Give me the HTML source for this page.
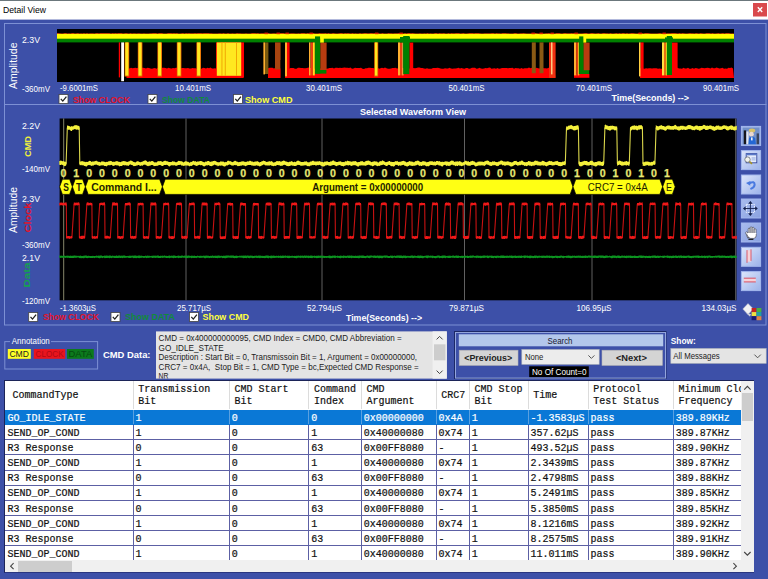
<!DOCTYPE html>
<html><head><meta charset="utf-8"><title>Detail View</title>
<style>
html,body{margin:0;padding:0;}
body{width:768px;height:579px;overflow:hidden;background:#3d50a8;position:relative;font-family:"Liberation Sans",sans-serif;}
svg text{font-family:"Liberation Sans",sans-serif;}
#top{position:absolute;left:0;top:0;}
.grid{position:absolute;left:4.2px;top:379.6px;width:749.6px;height:193.4px;background:#fff;border-top:1.4px solid #1c2458;border-left:1.4px solid #1c2458;border-bottom:0.6px solid #2a3680;box-sizing:border-box;overflow:hidden;font-family:"Liberation Mono",monospace;font-size:10px;color:#111;}
.hc{position:absolute;top:0;height:28px;box-sizing:border-box;border-right:1px solid #dcdcdc;display:flex;align-items:center;padding-top:3.6px;line-height:12.5px;white-space:nowrap;overflow:hidden;-webkit-text-stroke:0.2px;}
.row{position:absolute;left:0;width:735.4px;height:15.13px;box-sizing:border-box;border-bottom:1px solid #5c60a4;}
.row.sel{background:#0a78d6;color:#fff;border-bottom-color:#0a78d6;}
.c{position:absolute;top:0;height:100%;box-sizing:border-box;border-right:1px solid #5c60a4;padding-left:1.8px;padding-top:1.8px;-webkit-text-stroke:0.2px;line-height:14.6px;white-space:nowrap;overflow:hidden;}
.row.sel .c{border-right-color:#5aa0e0;}
.vs{position:absolute;left:735.4px;top:0;width:14px;height:180px;background:#f0f0f0;}
.vth{position:absolute;left:1px;top:12px;width:11px;height:28px;background:#cdcdcd;}
.hs{position:absolute;left:0;top:179.6px;width:750px;height:13px;background:#f0f0f0;}
.hth{position:absolute;left:13px;top:1px;width:54px;height:10.4px;background:#cdcdcd;}
</style></head><body>
<svg id="top" width="768" height="380" viewBox="0 0 768 380">
<rect x="0" y="0" width="768" height="19.6" fill="#fff" />
<rect x="0" y="0" width="768" height="0.8" fill="#46565c" />
<text x="3" y="12.6" font-size="8.8" fill="#000" textLength="43" lengthAdjust="spacingAndGlyphs" >Detail View</text>
<rect x="753" y="3" width="14" height="13.5" fill="#d9494d" />
<path d="M757.8 7.2 L762.2 12 M762.2 7.2 L757.8 12" stroke="#fff" stroke-width="1.4" fill="none"/>
<rect x="4.5" y="23.5" width="761.5" height="81" fill="none" stroke="#7d90d4" stroke-width="1"/>
<rect x="4.5" y="104.5" width="761.5" height="220.5" fill="none" stroke="#7d90d4" stroke-width="1"/>
<rect x="57" y="29" width="677" height="53" fill="#000" />
<path d="M126.5 78 L126.5 68.0 L128.0 67.8 L129.5 68.4 L131.0 67.7 L132.5 68.3 L134.0 68.1 L135.5 67.7 L137.0 68.2 L138.5 67.6 L140.0 68.1 L141.5 67.7 L143.0 67.7 L144.5 68.1 L146.0 68.6 L147.5 67.8 L149.0 67.9 L150.5 68.4 L152.0 68.8 L153.5 68.3 L155.0 68.1 L156.5 68.8 L158.0 67.7 L159.5 68.7 L161.0 68.0 L162.5 67.8 L164.0 67.7 L165.5 68.0 L167.0 68.6 L168.5 67.8 L170.0 68.3 L171.5 68.4 L173.0 68.1 L174.5 68.3 L176.0 67.7 L177.5 67.7 L179.0 67.9 L180.5 68.5 L182.0 68.1 L183.5 68.0 L185.0 68.3 L186.5 68.2 L188.0 68.0 L189.5 68.6 L191.0 68.5 L192.5 67.9 L194.0 68.3 L195.5 68.3 L197.0 68.7 L198.5 68.5 L200.0 68.0 L201.5 68.8 L203.0 67.7 L204.5 68.1 L206.0 68.6 L207.5 67.8 L209.0 68.2 L210.5 67.6 L212.0 68.4 L213.5 68.6 L215.0 68.3 L216.5 68.7 L218.0 68.0 L219.5 68.5 L221.0 68.3 L222.5 68.3 L224.0 68.2 L225.5 68.7 L227.0 68.8 L228.5 68.2 L230.0 68.4 L231.5 67.7 L233.0 68.5 L234.5 68.4 L236.0 68.9 L237.5 68.6 L239.0 68.0 L240.5 68.1 L242.0 68.4 L243.5 67.6 L243.7 78 Z" fill="#ff0000"/>
<path d="M268 78 L268.0 68.2 L269.5 67.8 L271.0 67.7 L272.5 67.7 L274.0 68.6 L275.5 67.8 L277.0 67.9 L278.5 68.1 L280.0 68.7 L281.5 67.7 L283.0 68.2 L284.5 68.3 L286.0 68.7 L287.5 68.6 L289.0 68.7 L290.5 68.0 L292.0 68.1 L293.5 68.1 L295.0 68.7 L296.5 68.8 L298.0 67.8 L299.5 67.8 L301.0 67.9 L302.5 67.9 L304.0 68.2 L305.5 68.3 L307.0 67.9 L308.5 67.6 L310.0 68.1 L311.5 68.1 L313.0 68.3 L314.5 68.8 L316.0 68.5 L317.5 68.2 L319.0 68.4 L320.5 68.5 L322.0 67.7 L323.5 68.7 L325.0 68.6 L326.5 68.7 L328.0 68.6 L329.5 68.1 L331.0 68.1 L332.5 67.7 L334.0 68.4 L335.5 67.7 L337.0 67.7 L338.5 67.9 L340.0 67.8 L341.5 68.0 L343.0 67.7 L344.5 67.6 L346.0 67.8 L347.5 67.7 L349.0 68.1 L350.5 67.6 L352.0 68.7 L353.5 68.4 L355.0 67.8 L356.5 67.9 L358.0 68.0 L359.5 68.1 L361.0 67.8 L362.5 68.7 L364.0 68.9 L365.5 68.2 L367.0 68.2 L368.5 67.7 L370.0 67.7 L371.5 68.0 L373.0 67.9 L374.5 68.6 L376.0 67.8 L377.5 67.6 L379.0 68.8 L380.5 68.3 L382.0 67.8 L383.5 68.3 L385.0 67.6 L386.5 68.3 L388.0 68.8 L389.5 68.7 L391.0 68.5 L392.5 67.9 L394.0 68.1 L395.5 67.8 L397.0 68.6 L398.5 68.3 L400.0 68.6 L401.5 68.0 L403.0 67.9 L404.5 68.6 L406.0 68.8 L407.5 68.7 L409.0 68.6 L410.5 68.6 L412.0 68.5 L413.5 67.9 L415.0 68.3 L416.5 68.0 L418.0 67.6 L419.5 67.6 L421.0 68.0 L422.5 67.9 L424.0 68.5 L425.5 68.8 L427.0 68.2 L428.5 68.8 L430.0 68.8 L431.5 68.8 L433.0 68.1 L434.5 67.9 L436.0 67.9 L437.5 67.8 L439.0 67.9 L440.5 68.4 L442.0 68.7 L443.5 68.7 L445.0 68.2 L446.5 68.4 L448.0 68.6 L449.5 67.7 L451.0 68.4 L452.5 68.7 L454.0 68.6 L455.5 68.5 L457.0 68.2 L458.5 67.8 L460.0 68.6 L461.5 68.0 L463.0 68.6 L464.5 68.8 L466.0 68.1 L467.5 68.1 L469.0 68.8 L470.5 68.5 L472.0 67.8 L473.5 67.8 L475.0 67.8 L476.5 68.7 L478.0 68.6 L479.5 67.8 L481.0 68.6 L482.5 68.8 L484.0 68.4 L485.5 68.0 L487.0 68.3 L488.5 67.8 L490.0 67.6 L491.5 68.8 L493.0 68.4 L494.5 68.3 L496.0 68.8 L497.5 68.1 L499.0 68.7 L500.5 68.6 L502.0 67.9 L503.5 67.9 L505.0 68.0 L506.5 67.9 L508.0 68.3 L509.5 67.9 L511.0 68.1 L512.5 67.8 L514.0 68.7 L515.5 68.0 L517.0 68.2 L518.5 68.3 L520.0 68.7 L521.5 68.1 L523.0 68.8 L524.5 68.2 L526.0 68.3 L527.5 68.3 L529.0 67.6 L530.5 68.2 L532.0 67.8 L533.5 67.6 L535.0 68.6 L536.5 67.8 L538.0 68.2 L539.5 68.5 L541.0 68.3 L542.5 68.0 L544.0 68.3 L545.5 68.3 L547.0 68.6 L548.5 67.7 L550.0 68.3 L551.5 67.9 L553.0 67.9 L554.5 68.6 L555.4 78 Z" fill="#ff0000"/>
<path d="M640 78 L640.0 68.2 L641.5 68.3 L643.0 68.6 L644.5 68.7 L646.0 68.2 L647.5 68.4 L649.0 68.2 L650.5 68.2 L652.0 68.5 L653.5 68.2 L655.0 68.3 L656.5 68.2 L658.0 68.8 L659.5 68.5 L661.0 68.7 L662.5 68.8 L664.0 67.9 L665.5 68.3 L667.0 68.8 L668.5 68.7 L670.0 67.8 L671.5 67.8 L673.0 68.2 L674.5 67.7 L676.0 67.9 L677.5 67.7 L679.0 68.4 L680.5 68.6 L682.0 68.7 L683.5 67.8 L685.0 68.5 L686.5 68.4 L688.0 67.8 L689.5 68.7 L691.0 68.8 L692.5 67.9 L694.0 68.8 L695.5 68.1 L697.0 68.2 L698.5 68.8 L700.0 68.6 L701.5 67.8 L703.0 68.1 L704.5 68.2 L706.0 68.0 L707.5 67.8 L709.0 68.0 L710.5 68.5 L712.0 67.6 L713.5 68.3 L715.0 68.2 L716.5 67.6 L718.0 68.0 L719.5 68.4 L721.0 68.2 L722.5 67.7 L724.0 68.8 L725.5 68.6 L727.0 68.8 L728.5 67.7 L730.0 67.9 L731.5 67.6 L733.0 68.6 L734 78 Z" fill="#ff0000"/>
<path d="M57 35 L57.0 33.1 L58.5 33.0 L60.0 33.2 L61.5 33.5 L63.0 33.5 L64.5 33.1 L66.0 33.0 L67.5 33.5 L69.0 33.3 L70.5 33.4 L72.0 33.0 L73.5 33.0 L75.0 33.4 L76.5 33.2 L78.0 33.0 L79.5 33.5 L81.0 33.3 L82.5 33.5 L84.0 33.0 L85.5 33.5 L87.0 33.0 L88.5 33.5 L90.0 33.2 L91.5 33.2 L93.0 33.3 L94.5 33.5 L96.0 33.1 L97.5 33.0 L99.0 33.3 L100.5 33.1 L102.0 33.0 L103.5 33.1 L105.0 33.0 L106.5 33.1 L108.0 33.1 L109.5 33.1 L111.0 33.4 L112.5 33.1 L114.0 33.3 L115.5 33.1 L117.0 33.2 L118.5 33.0 L120.0 33.1 L121.5 33.0 L123.0 33.4 L124.5 33.3 L126.0 33.1 L127.5 33.2 L129.0 33.5 L130.5 33.0 L132.0 33.5 L133.5 33.2 L135.0 33.3 L136.5 33.5 L138.0 33.2 L139.5 33.3 L141.0 33.4 L142.5 33.6 L144.0 33.2 L145.5 33.5 L147.0 33.4 L148.5 33.4 L150.0 33.2 L151.5 33.2 L153.0 33.0 L154.5 33.0 L156.0 33.0 L157.5 33.4 L159.0 33.1 L160.5 33.1 L162.0 33.0 L163.5 33.5 L165.0 33.5 L166.5 33.4 L168.0 33.1 L169.5 33.1 L171.0 33.1 L172.5 33.2 L174.0 33.0 L175.5 33.2 L177.0 33.1 L178.5 33.6 L180.0 33.6 L181.5 33.3 L183.0 33.1 L184.5 33.6 L186.0 33.1 L187.5 33.2 L189.0 33.0 L190.5 33.2 L192.0 33.2 L193.5 33.3 L195.0 33.1 L196.5 33.3 L198.0 33.0 L199.5 33.1 L201.0 33.0 L202.5 33.2 L204.0 33.0 L205.5 33.0 L207.0 33.1 L208.5 33.1 L210.0 33.3 L211.5 33.3 L213.0 33.4 L214.5 33.4 L216.0 33.4 L217.5 33.5 L219.0 33.2 L220.5 33.2 L222.0 33.6 L223.5 33.0 L225.0 33.4 L226.5 33.4 L228.0 33.0 L229.5 33.5 L231.0 33.5 L232.5 33.3 L234.0 33.4 L235.5 33.5 L237.0 33.0 L238.5 33.3 L240.0 33.3 L241.5 33.5 L243.0 33.5 L244.5 33.5 L246.0 33.3 L247.5 33.5 L249.0 33.4 L250.5 33.4 L252.0 33.1 L253.5 33.0 L255.0 33.0 L256.5 33.2 L258.0 33.0 L259.5 33.5 L261.0 33.3 L262.5 33.3 L264.0 33.3 L265.5 33.4 L267.0 33.3 L268.5 33.0 L270.0 33.5 L271.5 33.4 L273.0 33.3 L274.5 33.3 L276.0 33.4 L277.5 33.0 L279.0 33.4 L280.5 33.1 L282.0 33.0 L283.5 33.1 L285.0 33.4 L286.5 33.1 L288.0 33.4 L289.5 33.6 L291.0 33.3 L292.5 33.2 L294.0 33.3 L295.5 33.4 L297.0 33.4 L298.5 33.3 L300.0 33.4 L301.5 33.0 L303.0 33.0 L304.5 33.1 L306.0 33.4 L307.5 33.1 L309.0 33.3 L310.5 33.0 L312.0 33.0 L313.5 33.1 L315.0 33.4 L316.5 33.4 L318.0 33.4 L319.5 33.1 L321.0 33.3 L322.5 33.2 L324.0 33.2 L325.5 33.0 L327.0 33.5 L328.5 33.1 L330.0 33.6 L331.5 33.5 L333.0 33.0 L334.5 33.2 L336.0 33.5 L337.5 33.6 L339.0 33.2 L340.5 33.1 L342.0 33.1 L343.5 33.5 L345.0 33.1 L346.5 33.3 L348.0 33.0 L349.5 33.3 L351.0 33.6 L352.5 33.0 L354.0 33.5 L355.5 33.3 L357.0 33.5 L358.5 33.4 L360.0 33.1 L361.5 33.5 L363.0 33.3 L364.5 33.0 L366.0 33.0 L367.5 33.3 L369.0 33.2 L370.5 33.1 L372.0 33.0 L373.5 33.2 L375.0 33.1 L376.5 33.5 L378.0 33.0 L379.5 33.4 L381.0 33.5 L382.5 33.0 L384.0 33.5 L385.5 33.4 L387.0 33.5 L388.5 33.1 L390.0 33.2 L391.5 33.2 L393.0 33.6 L394.5 33.3 L396.0 33.2 L397.5 33.2 L399.0 33.1 L400.5 33.0 L402.0 33.0 L403.5 33.5 L405.0 33.1 L406.5 33.5 L408.0 33.1 L409.5 33.1 L411.0 33.3 L412.5 33.1 L414.0 33.2 L415.5 33.6 L417.0 33.5 L418.5 33.5 L420.0 33.3 L421.5 33.5 L423.0 33.5 L424.5 33.3 L426.0 33.4 L427.5 33.0 L429.0 33.4 L430.5 33.2 L432.0 33.4 L433.5 33.4 L435.0 33.1 L436.5 33.0 L438.0 33.5 L439.5 33.0 L441.0 33.2 L442.5 33.2 L444.0 33.1 L445.5 33.4 L447.0 33.6 L448.5 33.1 L450.0 33.4 L451.5 33.1 L453.0 33.3 L454.5 33.2 L456.0 33.1 L457.5 33.1 L459.0 33.1 L460.5 33.5 L462.0 33.3 L463.5 33.1 L465.0 33.5 L466.5 33.6 L468.0 33.2 L469.5 33.0 L471.0 33.1 L472.5 33.0 L474.0 33.2 L475.5 33.0 L477.0 33.1 L478.5 33.1 L480.0 33.3 L481.5 33.5 L483.0 33.4 L484.5 33.2 L486.0 33.2 L487.5 33.3 L489.0 33.2 L490.5 33.2 L492.0 33.0 L493.5 33.1 L495.0 33.6 L496.5 33.0 L498.0 33.3 L499.5 33.3 L501.0 33.5 L502.5 33.1 L504.0 33.1 L505.5 33.1 L507.0 33.2 L508.5 33.2 L510.0 33.6 L511.5 33.5 L513.0 33.5 L514.5 33.0 L516.0 33.0 L517.5 33.4 L519.0 33.5 L520.5 33.2 L522.0 33.3 L523.5 33.0 L525.0 33.2 L526.5 33.5 L528.0 33.5 L529.5 33.5 L531.0 33.6 L532.5 33.1 L534.0 33.0 L535.5 33.0 L537.0 33.3 L538.5 33.4 L540.0 33.5 L541.5 33.4 L543.0 33.4 L544.5 33.4 L546.0 33.2 L547.5 33.3 L549.0 33.0 L550.5 33.4 L552.0 33.1 L553.5 33.5 L555.0 33.4 L556.5 33.1 L558.0 33.0 L559.5 33.1 L561.0 33.4 L562.5 33.4 L564.0 33.0 L565.5 33.0 L567.0 33.3 L568.5 33.3 L570.0 33.2 L571.5 33.1 L573.0 33.3 L574.5 33.0 L576.0 33.1 L577.5 33.2 L579.0 33.6 L580.5 33.4 L582.0 33.5 L583.5 33.2 L585.0 33.1 L586.5 33.1 L588.0 33.6 L589.5 33.4 L591.0 33.1 L592.5 33.0 L594.0 33.3 L595.5 33.4 L597.0 33.2 L598.5 33.1 L600.0 33.4 L601.5 33.5 L603.0 33.1 L604.5 33.0 L606.0 33.2 L607.5 33.2 L609.0 33.4 L610.5 33.1 L612.0 33.5 L613.5 33.4 L615.0 33.3 L616.5 33.1 L618.0 33.6 L619.5 33.1 L621.0 33.5 L622.5 33.1 L624.0 33.1 L625.5 33.4 L627.0 33.1 L628.5 33.5 L630.0 33.3 L631.5 33.1 L633.0 33.1 L634.5 33.2 L636.0 33.4 L637.5 33.5 L639.0 33.0 L640.5 33.2 L642.0 33.1 L643.5 33.6 L645.0 33.0 L646.5 33.0 L648.0 33.0 L649.5 33.2 L651.0 33.5 L652.5 33.5 L654.0 33.4 L655.5 33.6 L657.0 33.5 L658.5 33.2 L660.0 33.1 L661.5 33.5 L663.0 33.4 L664.5 33.0 L666.0 33.4 L667.5 33.2 L669.0 33.2 L670.5 33.2 L672.0 33.1 L673.5 33.0 L675.0 33.1 L676.5 33.2 L678.0 33.6 L679.5 33.0 L681.0 33.6 L682.5 33.1 L684.0 33.2 L685.5 33.5 L687.0 33.5 L688.5 33.2 L690.0 33.0 L691.5 33.2 L693.0 33.2 L694.5 33.5 L696.0 33.1 L697.5 33.2 L699.0 33.5 L700.5 33.0 L702.0 33.2 L703.5 33.5 L705.0 33.4 L706.5 33.0 L708.0 33.0 L709.5 33.0 L711.0 33.5 L712.5 33.1 L714.0 33.4 L715.5 33.5 L717.0 33.2 L718.5 33.1 L720.0 33.6 L721.5 33.3 L723.0 33.1 L724.5 33.4 L726.0 33.1 L727.5 33.1 L729.0 33.0 L730.5 33.4 L732.0 33.5 L733.5 33.3 L734 35 Z" fill="#c03000"/>
<rect x="57" y="33.9" width="677" height="5" fill="#ffff00" />
<rect x="57" y="38.8" width="677" height="3.6" fill="#008000" />
<rect x="118.8" y="42.4" width="1.2" height="35" fill="#ff0000" />
<rect x="121.2" y="42.4" width="2.8" height="38.8" fill="#fff" />
<rect x="124.60000000000001" y="42.4" width="4.6" height="34.199999999999996" fill="#e86000" />
<rect x="125.30000000000001" y="42.4" width="3.1" height="33.199999999999996" fill="#ffe820" />
<rect x="137.79999999999998" y="42.4" width="4.6" height="34.199999999999996" fill="#e86000" />
<rect x="138.5" y="42.4" width="3.1" height="33.199999999999996" fill="#ffe820" />
<rect x="157.39999999999998" y="42.4" width="4.6" height="34.199999999999996" fill="#e86000" />
<rect x="158.1" y="42.4" width="3.1" height="33.199999999999996" fill="#ffe820" />
<rect x="176.79999999999998" y="42.4" width="4.6" height="34.199999999999996" fill="#e86000" />
<rect x="177.5" y="42.4" width="3.1" height="33.199999999999996" fill="#ffe820" />
<rect x="196.39999999999998" y="42.4" width="4.6" height="34.199999999999996" fill="#e86000" />
<rect x="197.1" y="42.4" width="3.1" height="33.199999999999996" fill="#ffe820" />
<rect x="216" y="42.4" width="28" height="34.6" fill="#ff0000" />
<rect x="216.8" y="42.4" width="24.4" height="33.4" fill="#ffe820" />
<rect x="221.5" y="42.4" width="0.9" height="33.4" fill="#f0a000" />
<rect x="224.8" y="42.4" width="0.9" height="33.4" fill="#f0a000" />
<rect x="236" y="42.4" width="0.9" height="33.4" fill="#f0a000" />
<rect x="263.4" y="42.4" width="1.6" height="32" fill="#ffb030" />
<rect x="265" y="42.4" width="3.4" height="31.6" fill="#7a5a10" />
<rect x="275" y="42.4" width="5.6" height="27" fill="#a84410" />
<rect x="280.6" y="60" width="4.4" height="18" fill="#000" />
<rect x="285" y="42.4" width="2" height="34" fill="#ffb030" />
<rect x="287" y="42.4" width="2.6" height="35.4" fill="#ff0000" />
<rect x="309" y="42.4" width="1.6" height="33" fill="#ffb030" />
<rect x="310.8" y="42.4" width="2.2" height="33" fill="#e84010" />
<rect x="313" y="42.4" width="1.8" height="33" fill="#ffe020" />
<rect x="315" y="36.4" width="5.4" height="37.2" fill="#008000" />
<rect x="315" y="70" width="11.4" height="3.6" fill="#008000" />
<rect x="320.4" y="42.6" width="6.2" height="27.4" fill="#b83c10" />
<rect x="320.2" y="34" width="3.6" height="8.6" fill="#ffff00" />
<rect x="374.2" y="42.4" width="4.0" height="34.199999999999996" fill="#e86000" />
<rect x="374.9" y="42.4" width="2.5" height="33.199999999999996" fill="#ffe820" />
<rect x="398" y="42.4" width="2" height="33" fill="#ffb030" />
<rect x="400" y="42.4" width="2.6" height="33" fill="#e84010" />
<rect x="402.4" y="42.4" width="1" height="33" fill="#ffe060" />
<rect x="400" y="37" width="10" height="5.5" fill="#008000" />
<rect x="403.2" y="36" width="6.4" height="38.1" fill="#008000" />
<rect x="409.6" y="42.6" width="3.6" height="31.6" fill="#ff0000" />
<rect x="531.8" y="42.4" width="4" height="30.8" fill="#8a5a14" />
<rect x="539.5" y="42.4" width="4" height="30.8" fill="#8a5a14" />
<rect x="549" y="42.4" width="6.6" height="35.4" fill="#f03010" />
<rect x="551.2" y="42.4" width="1.2" height="32" fill="#fff0a0" />
<rect x="574" y="74" width="15.4" height="3.8" fill="#ff0000" />
<rect x="574" y="42.4" width="2.2" height="33" fill="#ffb030" />
<rect x="576.2" y="42.4" width="2" height="33" fill="#e84010" />
<rect x="578.2" y="42.4" width="1" height="33" fill="#ffe020" />
<rect x="579.2" y="36.4" width="4.6" height="37.6" fill="#008000" />
<rect x="579.2" y="70" width="10" height="4" fill="#008000" />
<rect x="583.6" y="42.6" width="6" height="27.6" fill="#b83c10" />
<rect x="583.4" y="34" width="2.8" height="8.6" fill="#ffff00" />
<rect x="639" y="42.4" width="1.7" height="34" fill="#ffd040" />
<rect x="640.7" y="42.4" width="2.9" height="35.6" fill="#ff0000" />
<rect x="662" y="42.4" width="2" height="33" fill="#ffe040" />
<rect x="664" y="42.4" width="2" height="33" fill="#e87010" />
<rect x="666" y="42.4" width="1" height="33" fill="#ffe020" />
<rect x="666.8" y="36" width="5.2" height="39" fill="#008000" />
<rect x="665" y="37.4" width="8" height="1.6" fill="#008000" />
<rect x="672" y="42.6" width="5.6" height="35.2" fill="#ff0000" />
<rect x="264.5" y="32.6" width="3.4" height="1.6" fill="#d82000" />
<rect x="276.5" y="32.6" width="3.4" height="1.6" fill="#d82000" />
<rect x="285.5" y="32.6" width="3.4" height="1.6" fill="#d82000" />
<rect x="309.5" y="32.6" width="3.4" height="1.6" fill="#d82000" />
<rect x="375.0" y="32.6" width="3.4" height="1.6" fill="#d82000" />
<rect x="399.5" y="32.6" width="3.4" height="1.6" fill="#d82000" />
<rect x="531.5" y="32.6" width="3.4" height="1.6" fill="#d82000" />
<rect x="539.5" y="32.6" width="3.4" height="1.6" fill="#d82000" />
<rect x="550.5" y="32.6" width="3.4" height="1.6" fill="#d82000" />
<rect x="574.5" y="32.6" width="3.4" height="1.6" fill="#d82000" />
<rect x="638.5" y="32.6" width="3.4" height="1.6" fill="#d82000" />
<rect x="662.5" y="32.6" width="3.4" height="1.6" fill="#d82000" />
<text x="16.5" y="89" font-size="10" fill="#fff" textLength="46.5" lengthAdjust="spacingAndGlyphs" transform="rotate(-90 16.5 89)" >Amplitude</text>
<text x="22" y="43" font-size="9" fill="#fff" textLength="18" lengthAdjust="spacingAndGlyphs" >2.3V</text>
<text x="22" y="92.4" font-size="9" fill="#fff" textLength="28" lengthAdjust="spacingAndGlyphs" >-360mV</text>
<text x="60" y="91" font-size="9" fill="#fff" textLength="38" lengthAdjust="spacingAndGlyphs" >-9.6001mS</text>
<text x="175" y="91" font-size="9" fill="#fff" textLength="36" lengthAdjust="spacingAndGlyphs" >10.401mS</text>
<text x="306" y="91" font-size="9" fill="#fff" textLength="36" lengthAdjust="spacingAndGlyphs" >30.401mS</text>
<text x="448.5" y="91" font-size="9" fill="#fff" textLength="36" lengthAdjust="spacingAndGlyphs" >50.401mS</text>
<text x="576" y="91" font-size="9" fill="#fff" textLength="36" lengthAdjust="spacingAndGlyphs" >70.401mS</text>
<text x="703" y="91" font-size="9" fill="#fff" textLength="36" lengthAdjust="spacingAndGlyphs" >90.401mS</text>
<text x="611.5" y="100.6" font-size="9" fill="#fff" font-weight="bold" textLength="77.5" lengthAdjust="spacingAndGlyphs" >Time(Seconds) --&gt;</text>
<rect x="59" y="94.5" width="9" height="9" fill="#fff" stroke="#444" stroke-width="0.8"/>
<path d="M60.8 98.9 L62.8 101.1 L66.4 96.7" fill="none" stroke="#222" stroke-width="1.3"/>
<text x="73" y="102.6" font-size="9" fill="#e4132a" font-weight="bold" textLength="57" lengthAdjust="spacingAndGlyphs" >Show CLOCK</text>
<rect x="148" y="94.5" width="9" height="9" fill="#fff" stroke="#444" stroke-width="0.8"/>
<path d="M149.8 98.9 L151.8 101.1 L155.4 96.7" fill="none" stroke="#222" stroke-width="1.3"/>
<text x="162" y="102.6" font-size="9" fill="#118a3c" font-weight="bold" textLength="48" lengthAdjust="spacingAndGlyphs" >Show DATA</text>
<rect x="233.5" y="94.5" width="9" height="9" fill="#fff" stroke="#444" stroke-width="0.8"/>
<path d="M235.3 98.9 L237.3 101.1 L240.9 96.7" fill="none" stroke="#222" stroke-width="1.3"/>
<text x="245" y="102.6" font-size="9" fill="#ffff3c" font-weight="bold" textLength="47.5" lengthAdjust="spacingAndGlyphs" >Show CMD</text>
<text x="360" y="114.8" font-size="9.2" fill="#fff" font-weight="bold" textLength="106" lengthAdjust="spacingAndGlyphs" >Selected Waveform View</text>
<rect x="59.6" y="118.5" width="676.9" height="181.8" fill="#000" />
<line x1="186" y1="118.5" x2="186" y2="300.3" stroke="#7a7a7a" stroke-width="0.8" />
<line x1="322" y1="118.5" x2="322" y2="300.3" stroke="#7a7a7a" stroke-width="0.8" />
<line x1="464.5" y1="118.5" x2="464.5" y2="300.3" stroke="#7a7a7a" stroke-width="0.8" />
<line x1="592" y1="118.5" x2="592" y2="300.3" stroke="#7a7a7a" stroke-width="0.8" />
<line x1="735.7" y1="118.5" x2="735.7" y2="300.3" stroke="#7a7a7a" stroke-width="0.8" />
<line x1="63.7" y1="118.5" x2="63.7" y2="300.3" stroke="#a8a884" stroke-width="0.8" />
<path d="M66.1 163.5 L67.3 127.8 M79.2 127.8 L79.8 163.5 M565.3 163.5 L566.5 127.8 M578.4 127.8 L579.0 163.5 M603.7 163.5 L604.9 127.8 M616.8 127.8 L617.4 163.5 M629.3 163.5 L630.5 127.8 M642.4 127.8 L643.0 163.5 M654.9 163.5 L656.1 127.8" fill="none" stroke="#dcd84c" stroke-width="1.1" stroke-linecap="round"/>
<path d="M59.3 160.9 L60.1 161.1 L60.9 160.3 L61.7 160.9 L62.5 161.2 L63.3 161.1 L64.1 161.6 L64.9 161.7 L65.7 161.7 L66.4 161.9 L66.4 165.1 L65.7 165.7 L64.9 166.2 L64.1 166.0 L63.3 165.2 L62.5 165.1 L61.7 164.6 L60.9 165.1 L60.1 164.9 L59.3 164.8Z M67.0 125.9 L67.8 125.3 L68.6 125.9 L69.4 126.1 L70.2 126.7 L71.0 126.6 L71.8 126.1 L72.6 126.4 L73.4 126.2 L74.2 125.2 L75.0 125.4 L75.8 125.1 L76.6 125.2 L77.4 125.6 L78.2 125.7 L79.0 125.9 L79.5 126.2 L79.5 129.3 L79.0 129.9 L78.2 129.8 L77.4 129.4 L76.6 129.8 L75.8 129.4 L75.0 129.1 L74.2 129.3 L73.4 129.8 L72.6 129.8 L71.8 130.9 L71.0 130.9 L70.2 130.3 L69.4 129.5 L68.6 129.9 L67.8 129.2 L67.0 129.6Z M79.5 161.4 L80.3 161.5 L81.1 161.4 L81.9 160.9 L82.7 161.2 L83.5 161.5 L84.3 161.7 L85.1 161.8 L85.9 162.3 L86.7 161.7 L87.5 162.1 L88.3 161.7 L89.1 160.7 L89.9 160.9 L90.7 161.1 L91.5 161.9 L92.3 161.4 L93.1 161.6 L93.9 161.6 L94.7 161.3 L95.5 161.0 L96.3 160.6 L97.1 161.5 L97.9 161.3 L98.7 162.0 L99.5 161.8 L100.3 162.4 L101.1 161.8 L101.9 161.3 L102.7 161.6 L103.5 161.4 L104.3 161.8 L105.1 162.1 L105.9 162.2 L106.7 161.8 L107.5 161.9 L108.3 161.2 L109.1 161.4 L109.9 160.8 L110.7 160.9 L111.5 161.1 L112.3 161.9 L113.1 161.6 L113.9 162.1 L114.7 161.7 L115.5 161.6 L116.3 161.1 L117.1 161.5 L117.9 161.1 L118.7 162.0 L119.5 161.7 L120.3 162.3 L121.1 161.8 L121.9 161.5 L122.7 161.2 L123.5 160.9 L124.3 161.2 L125.1 160.9 L125.9 161.7 L126.7 161.7 L127.5 162.1 L128.3 161.4 L129.1 161.6 L129.9 160.7 L130.7 160.5 L131.5 160.8 L132.3 161.1 L133.1 161.8 L133.9 162.1 L134.7 162.2 L135.5 162.4 L136.3 161.7 L137.1 161.2 L137.9 161.3 L138.7 161.4 L139.5 162.0 L140.3 162.3 L141.1 162.0 L141.9 161.8 L142.7 161.4 L143.5 161.1 L144.3 160.8 L145.1 160.3 L145.9 160.6 L146.7 161.0 L147.5 161.9 L148.3 161.8 L149.1 161.4 L149.9 161.3 L150.7 161.7 L151.5 160.9 L152.3 160.9 L153.1 161.3 L153.9 161.9 L154.7 162.5 L155.5 162.3 L156.3 162.5 L157.1 162.0 L157.9 161.1 L158.7 161.3 L159.5 161.3 L160.3 161.1 L161.1 161.2 L161.9 161.6 L162.7 162.0 L163.5 161.3 L164.3 160.9 L165.1 160.5 L165.9 161.0 L166.7 161.2 L167.5 161.3 L168.3 161.7 L169.1 162.1 L169.9 162.1 L170.7 162.1 L171.5 162.0 L172.3 161.2 L173.1 161.2 L173.9 161.7 L174.7 161.5 L175.5 162.3 L176.3 162.3 L177.1 162.0 L177.9 161.3 L178.7 160.8 L179.5 161.0 L180.3 161.0 L181.1 161.4 L181.9 161.1 L182.7 161.9 L183.5 162.4 L184.3 161.8 L185.1 161.4 L185.9 160.9 L186.7 161.5 L187.5 161.8 L188.3 161.8 L189.1 162.4 L189.9 162.7 L190.7 161.8 L191.5 162.1 L192.3 161.4 L193.1 160.7 L193.9 161.0 L194.7 161.4 L195.5 161.0 L196.3 162.0 L197.1 161.5 L197.9 161.4 L198.7 161.6 L199.5 161.3 L200.3 161.1 L201.1 160.9 L201.9 161.2 L202.7 161.7 L203.5 161.9 L204.3 162.5 L205.1 161.7 L205.9 161.5 L206.7 161.7 L207.5 161.0 L208.3 161.0 L209.1 161.1 L209.9 161.9 L210.7 161.7 L211.5 161.6 L212.3 161.5 L213.1 161.0 L213.9 160.9 L214.7 160.7 L215.5 161.1 L216.3 161.6 L217.1 162.0 L217.9 162.3 L218.7 162.2 L219.5 162.3 L220.3 161.4 L221.1 161.2 L221.9 161.7 L222.7 161.6 L223.5 161.5 L224.3 162.5 L225.1 161.8 L225.9 162.3 L226.7 161.9 L227.5 160.8 L228.3 160.7 L229.1 160.7 L229.9 161.4 L230.7 161.1 L231.5 161.8 L232.3 162.2 L233.1 161.8 L233.9 161.5 L234.7 160.7 L235.5 160.7 L236.3 161.6 L237.1 161.6 L237.9 162.1 L238.7 162.2 L239.5 161.9 L240.3 161.7 L241.1 162.1 L241.9 161.0 L242.7 161.5 L243.5 161.2 L244.3 161.7 L245.1 161.8 L245.9 162.0 L246.7 161.8 L247.5 161.2 L248.3 161.4 L249.1 161.2 L249.9 160.6 L250.7 161.0 L251.5 161.6 L252.3 161.6 L253.1 161.8 L253.9 162.3 L254.7 161.4 L255.5 161.6 L256.3 161.6 L257.1 161.3 L257.9 161.3 L258.7 162.0 L259.5 162.4 L260.3 161.9 L261.1 162.0 L261.9 161.1 L262.7 161.3 L263.5 160.4 L264.3 161.1 L265.1 160.9 L265.9 161.8 L266.7 162.0 L267.5 161.8 L268.3 161.8 L269.1 160.9 L269.9 161.5 L270.7 161.5 L271.5 161.0 L272.3 161.6 L273.1 162.4 L273.9 162.6 L274.7 162.3 L275.5 161.9 L276.3 161.2 L277.1 161.0 L277.9 161.3 L278.7 161.2 L279.5 161.0 L280.3 161.6 L281.1 161.8 L281.9 161.3 L282.7 161.0 L283.5 160.6 L284.3 160.7 L285.1 161.1 L285.9 161.7 L286.7 161.5 L287.5 162.0 L288.3 162.3 L289.1 161.9 L289.9 161.6 L290.7 161.7 L291.5 161.0 L292.3 161.4 L293.1 162.0 L293.9 162.2 L294.7 161.6 L295.5 162.2 L296.3 161.5 L297.1 161.1 L297.9 160.5 L298.7 160.8 L299.5 161.2 L300.3 161.4 L301.1 162.0 L301.9 162.0 L302.7 162.1 L303.5 162.1 L304.3 161.5 L305.1 161.4 L305.9 161.6 L306.7 161.2 L307.5 162.2 L308.3 162.3 L309.1 162.6 L309.9 161.7 L310.7 161.6 L311.5 161.4 L312.3 161.0 L313.1 160.6 L313.9 161.2 L314.7 161.4 L315.5 161.4 L316.3 161.4 L317.1 161.6 L317.9 161.2 L318.7 161.4 L319.5 161.1 L320.3 161.4 L321.1 161.7 L321.9 161.9 L322.7 161.9 L323.5 162.6 L324.3 161.6 L325.1 161.9 L325.9 161.2 L326.7 161.6 L327.5 161.2 L328.3 162.0 L329.1 162.1 L329.9 162.0 L330.7 161.3 L331.5 161.6 L332.3 160.8 L333.1 160.6 L333.9 160.5 L334.7 161.4 L335.5 161.5 L336.3 161.9 L337.1 162.0 L337.9 162.1 L338.7 161.6 L339.5 161.4 L340.3 161.3 L341.1 161.4 L341.9 162.2 L342.7 162.0 L343.5 162.0 L344.3 162.2 L345.1 161.3 L345.9 161.2 L346.7 161.4 L347.5 160.6 L348.3 161.1 L349.1 161.2 L349.9 161.2 L350.7 161.5 L351.5 161.8 L352.3 161.6 L353.1 161.2 L353.9 161.3 L354.7 161.2 L355.5 161.1 L356.3 161.5 L357.1 162.2 L357.9 162.3 L358.7 162.0 L359.5 161.9 L360.3 161.6 L361.1 161.0 L361.9 161.5 L362.7 161.0 L363.5 162.0 L364.3 162.2 L365.1 161.3 L365.9 161.3 L366.7 160.8 L367.5 160.7 L368.3 160.6 L369.1 160.8 L369.9 161.2 L370.7 161.5 L371.5 162.3 L372.3 161.8 L373.1 161.8 L373.9 161.3 L374.7 161.3 L375.5 161.5 L376.3 161.6 L377.1 161.6 L377.9 162.4 L378.7 162.5 L379.5 161.6 L380.3 161.1 L381.1 161.5 L381.9 160.7 L382.7 160.3 L383.5 161.1 L384.3 161.2 L385.1 162.0 L385.9 162.2 L386.7 162.0 L387.5 161.8 L388.3 161.5 L389.1 160.9 L389.9 161.1 L390.7 162.1 L391.5 161.8 L392.3 162.1 L393.1 162.1 L393.9 162.0 L394.7 161.8 L395.5 161.0 L396.3 161.4 L397.1 160.8 L397.9 161.5 L398.7 161.9 L399.5 161.7 L400.3 161.7 L401.1 161.4 L401.9 161.3 L402.7 161.0 L403.5 160.8 L404.3 161.3 L405.1 161.2 L405.9 161.9 L406.7 162.6 L407.5 161.9 L408.3 162.0 L409.1 161.1 L409.9 161.2 L410.7 161.4 L411.5 161.6 L412.3 161.7 L413.1 161.7 L413.9 162.4 L414.7 161.7 L415.5 161.0 L416.3 161.3 L417.1 160.4 L417.9 160.8 L418.7 160.8 L419.5 161.4 L420.3 162.0 L421.1 161.8 L421.9 162.0 L422.7 161.1 L423.5 161.2 L424.3 161.3 L425.1 161.7 L425.9 161.6 L426.7 162.5 L427.5 162.0 L428.3 162.0 L429.1 161.4 L429.9 161.3 L430.7 161.3 L431.5 161.2 L432.3 161.2 L433.1 161.4 L433.9 161.9 L434.7 161.3 L435.5 161.9 L436.3 161.0 L437.1 160.9 L437.9 160.9 L438.7 161.5 L439.5 161.1 L440.3 161.8 L441.1 161.9 L441.9 161.8 L442.7 161.8 L443.5 161.9 L444.3 161.7 L445.1 161.6 L445.9 161.2 L446.7 161.6 L447.5 161.4 L448.3 161.8 L449.1 162.1 L449.9 161.6 L450.7 160.9 L451.5 160.6 L452.3 160.8 L453.1 160.5 L453.9 161.6 L454.7 162.0 L455.5 161.6 L456.3 161.6 L457.1 161.5 L457.9 161.3 L458.7 161.7 L459.5 161.1 L460.3 161.4 L461.1 161.8 L461.9 162.5 L462.7 162.4 L463.5 161.9 L464.3 161.7 L465.1 160.9 L465.9 160.6 L466.7 161.3 L467.5 161.4 L468.3 161.1 L469.1 162.0 L469.9 162.1 L470.7 161.2 L471.5 161.3 L472.3 160.7 L473.1 160.9 L473.9 161.5 L474.7 161.5 L475.5 162.4 L476.3 162.5 L477.1 162.5 L477.9 161.6 L478.7 161.8 L479.5 161.4 L480.3 161.5 L481.1 161.7 L481.9 161.4 L482.7 161.8 L483.5 162.0 L484.3 161.7 L485.1 160.8 L485.9 161.3 L486.7 160.4 L487.5 160.6 L488.3 160.7 L489.1 161.3 L489.9 162.3 L490.7 161.8 L491.5 162.3 L492.3 161.3 L493.1 161.4 L493.9 161.6 L494.7 161.2 L495.5 162.1 L496.3 161.9 L497.1 162.3 L497.9 161.9 L498.7 161.4 L499.5 161.5 L500.3 160.7 L501.1 160.5 L501.9 160.6 L502.7 160.9 L503.5 161.6 L504.3 161.4 L505.1 161.4 L505.9 161.8 L506.7 161.4 L507.5 161.2 L508.3 161.6 L509.1 161.5 L509.9 162.2 L510.7 161.9 L511.5 162.5 L512.3 162.2 L513.1 162.1 L513.9 160.9 L514.7 161.1 L515.5 161.0 L516.3 160.8 L517.1 161.8 L517.9 161.9 L518.7 162.1 L519.5 161.3 L520.3 161.6 L521.1 160.8 L521.9 160.6 L522.7 160.7 L523.5 161.8 L524.3 161.9 L525.1 162.3 L525.9 162.2 L526.7 161.9 L527.5 161.9 L528.3 161.1 L529.1 161.0 L529.9 161.5 L530.7 161.4 L531.5 162.0 L532.3 161.7 L533.1 162.0 L533.9 161.5 L534.7 160.7 L535.5 160.5 L536.3 161.1 L537.1 160.6 L537.9 161.6 L538.7 161.6 L539.5 161.8 L540.3 161.8 L541.1 162.0 L541.9 160.9 L542.7 160.8 L543.5 161.1 L544.3 161.3 L545.1 161.9 L545.9 162.1 L546.7 162.2 L547.5 161.8 L548.3 161.5 L549.1 160.7 L549.9 161.1 L550.7 161.3 L551.5 160.9 L552.3 161.8 L553.1 161.7 L553.9 162.0 L554.7 161.6 L555.5 161.3 L556.3 161.3 L557.1 160.7 L557.9 161.2 L558.7 162.0 L559.5 162.1 L560.3 162.1 L561.1 162.3 L561.9 162.1 L562.7 161.6 L563.5 161.7 L564.3 160.9 L565.1 161.4 L565.6 161.9 L565.6 165.1 L565.1 165.4 L564.3 165.0 L563.5 165.1 L562.7 165.6 L561.9 165.9 L561.1 165.9 L560.3 166.2 L559.5 166.1 L558.7 165.9 L557.9 165.4 L557.1 165.1 L556.3 164.9 L555.5 164.8 L554.7 165.3 L553.9 165.3 L553.1 165.4 L552.3 165.5 L551.5 165.3 L550.7 165.1 L549.9 165.1 L549.1 164.9 L548.3 165.4 L547.5 165.7 L546.7 166.6 L545.9 166.0 L545.1 165.8 L544.3 165.3 L543.5 165.7 L542.7 165.3 L541.9 165.5 L541.1 165.2 L540.3 165.8 L539.5 165.5 L538.7 165.6 L537.9 165.3 L537.1 165.4 L536.3 164.8 L535.5 165.1 L534.7 165.4 L533.9 165.8 L533.1 165.6 L532.3 165.8 L531.5 166.3 L530.7 165.7 L529.9 165.4 L529.1 165.7 L528.3 165.1 L527.5 165.7 L526.7 166.3 L525.9 165.8 L525.1 165.8 L524.3 165.9 L523.5 165.1 L522.7 165.2 L521.9 164.5 L521.1 164.9 L520.3 165.2 L519.5 165.2 L518.7 165.3 L517.9 166.0 L517.1 165.2 L516.3 165.0 L515.5 164.6 L514.7 165.1 L513.9 165.3 L513.1 166.1 L512.3 166.3 L511.5 166.5 L510.7 166.5 L509.9 166.1 L509.1 165.5 L508.3 165.2 L507.5 165.2 L506.7 165.0 L505.9 165.8 L505.1 165.5 L504.3 165.7 L503.5 165.1 L502.7 165.5 L501.9 164.7 L501.1 164.3 L500.3 164.8 L499.5 164.8 L498.7 165.7 L497.9 166.2 L497.1 165.8 L496.3 166.0 L495.5 165.3 L494.7 165.1 L493.9 165.5 L493.1 165.1 L492.3 165.4 L491.5 165.9 L490.7 166.1 L489.9 165.5 L489.1 165.5 L488.3 164.7 L487.5 164.7 L486.7 164.3 L485.9 164.7 L485.1 165.6 L484.3 166.0 L483.5 165.5 L482.7 165.5 L481.9 165.3 L481.1 165.6 L480.3 165.6 L479.5 165.6 L478.7 165.5 L477.9 165.8 L477.1 166.0 L476.3 166.2 L475.5 166.4 L474.7 165.7 L473.9 164.9 L473.1 164.7 L472.3 165.0 L471.5 165.1 L470.7 165.6 L469.9 166.1 L469.1 165.6 L468.3 165.8 L467.5 165.5 L466.7 165.2 L465.9 164.6 L465.1 164.6 L464.3 165.2 L463.5 165.6 L462.7 165.8 L461.9 166.0 L461.1 166.2 L460.3 165.4 L459.5 165.7 L458.7 165.0 L457.9 165.9 L457.1 165.9 L456.3 165.5 L455.5 166.3 L454.7 165.6 L453.9 164.9 L453.1 165.4 L452.3 164.4 L451.5 164.7 L450.7 165.4 L449.9 165.5 L449.1 166.2 L448.3 165.8 L447.5 165.4 L446.7 165.9 L445.9 165.6 L445.1 164.8 L444.3 165.1 L443.5 165.3 L442.7 166.5 L441.9 166.5 L441.1 166.1 L440.3 165.6 L439.5 165.4 L438.7 165.5 L437.9 164.5 L437.1 164.9 L436.3 165.0 L435.5 165.7 L434.7 165.6 L433.9 165.2 L433.1 165.4 L432.3 165.1 L431.5 165.1 L430.7 164.7 L429.9 165.4 L429.1 165.8 L428.3 166.5 L427.5 166.0 L426.7 166.4 L425.9 165.8 L425.1 165.7 L424.3 165.0 L423.5 165.4 L422.7 165.2 L421.9 165.9 L421.1 166.1 L420.3 165.4 L419.5 165.9 L418.7 165.4 L417.9 164.6 L417.1 165.0 L416.3 165.2 L415.5 165.6 L414.7 165.7 L413.9 165.7 L413.1 165.8 L412.3 166.1 L411.5 165.7 L410.7 165.7 L409.9 165.1 L409.1 165.8 L408.3 165.9 L407.5 166.4 L406.7 166.6 L405.9 165.8 L405.1 165.9 L404.3 165.4 L403.5 164.8 L402.7 165.0 L401.9 165.3 L401.1 165.5 L400.3 165.7 L399.5 165.3 L398.7 165.9 L397.9 165.5 L397.1 164.7 L396.3 165.1 L395.5 164.7 L394.7 166.0 L393.9 166.4 L393.1 166.4 L392.3 165.9 L391.5 166.3 L390.7 165.9 L389.9 165.0 L389.1 164.9 L388.3 164.8 L387.5 165.8 L386.7 166.1 L385.9 166.0 L385.1 165.2 L384.3 165.1 L383.5 164.6 L382.7 164.7 L381.9 165.2 L381.1 165.0 L380.3 165.4 L379.5 165.9 L378.7 165.7 L377.9 166.1 L377.1 166.2 L376.3 165.4 L375.5 165.2 L374.7 165.1 L373.9 165.9 L373.1 165.8 L372.3 166.5 L371.5 165.6 L370.7 165.4 L369.9 165.3 L369.1 164.7 L368.3 164.8 L367.5 164.9 L366.7 165.2 L365.9 165.7 L365.1 165.8 L364.3 165.5 L363.5 165.4 L362.7 165.4 L361.9 165.3 L361.1 165.4 L360.3 165.5 L359.5 165.6 L358.7 166.4 L357.9 166.7 L357.1 166.0 L356.3 165.8 L355.5 165.2 L354.7 165.2 L353.9 165.0 L353.1 165.4 L352.3 165.4 L351.5 166.0 L350.7 165.8 L349.9 165.1 L349.1 165.2 L348.3 165.4 L347.5 165.2 L346.7 165.0 L345.9 165.4 L345.1 165.4 L344.3 166.0 L343.5 166.5 L342.7 166.1 L341.9 166.0 L341.1 165.7 L340.3 165.3 L339.5 165.1 L338.7 165.2 L337.9 165.6 L337.1 165.8 L336.3 166.2 L335.5 165.7 L334.7 165.3 L333.9 165.1 L333.1 165.1 L332.3 165.2 L331.5 165.6 L330.7 165.9 L329.9 165.5 L329.1 166.1 L328.3 165.3 L327.5 165.1 L326.7 165.6 L325.9 164.9 L325.1 165.9 L324.3 166.2 L323.5 166.5 L322.7 166.6 L321.9 165.9 L321.1 165.7 L320.3 165.2 L319.5 164.7 L318.7 165.2 L317.9 164.9 L317.1 165.3 L316.3 165.5 L315.5 165.5 L314.7 165.1 L313.9 165.0 L313.1 165.2 L312.3 165.0 L311.5 165.6 L310.7 165.6 L309.9 166.1 L309.1 166.5 L308.3 165.9 L307.5 166.2 L306.7 165.6 L305.9 165.5 L305.1 165.0 L304.3 165.6 L303.5 165.6 L302.7 165.8 L301.9 165.5 L301.1 166.1 L300.3 165.5 L299.5 165.1 L298.7 165.1 L297.9 164.8 L297.1 165.2 L296.3 165.7 L295.5 165.9 L294.7 166.0 L293.9 166.1 L293.1 165.6 L292.3 165.8 L291.5 165.2 L290.7 165.5 L289.9 166.1 L289.1 166.0 L288.3 166.2 L287.5 165.9 L286.7 166.0 L285.9 165.3 L285.1 165.1 L284.3 164.8 L283.5 165.1 L282.7 165.4 L281.9 165.9 L281.1 165.5 L280.3 165.9 L279.5 165.3 L278.7 165.3 L277.9 165.1 L277.1 165.0 L276.3 165.4 L275.5 166.1 L274.7 165.7 L273.9 166.0 L273.1 166.3 L272.3 165.7 L271.5 165.7 L270.7 165.1 L269.9 165.6 L269.1 165.6 L268.3 165.4 L267.5 165.5 L266.7 165.6 L265.9 165.2 L265.1 165.4 L264.3 164.6 L263.5 164.5 L262.7 164.9 L261.9 165.4 L261.1 165.7 L260.3 166.2 L259.5 166.4 L258.7 165.7 L257.9 165.7 L257.1 165.6 L256.3 165.3 L255.5 165.8 L254.7 165.8 L253.9 165.8 L253.1 165.7 L252.3 165.5 L251.5 165.4 L250.7 165.0 L249.9 165.1 L249.1 165.0 L248.3 165.1 L247.5 165.3 L246.7 165.4 L245.9 166.2 L245.1 165.9 L244.3 165.4 L243.5 165.4 L242.7 165.1 L241.9 165.7 L241.1 165.4 L240.3 165.7 L239.5 165.9 L238.7 166.0 L237.9 166.2 L237.1 165.8 L236.3 165.1 L235.5 165.2 L234.7 165.1 L233.9 165.2 L233.1 165.8 L232.3 165.5 L231.5 165.6 L230.7 165.1 L229.9 164.6 L229.1 164.6 L228.3 165.1 L227.5 165.4 L226.7 165.2 L225.9 165.7 L225.1 166.6 L224.3 166.4 L223.5 166.2 L222.7 165.8 L221.9 165.4 L221.1 165.5 L220.3 165.7 L219.5 165.4 L218.7 165.7 L217.9 166.4 L217.1 165.3 L216.3 165.6 L215.5 165.0 L214.7 164.5 L213.9 165.0 L213.1 165.5 L212.3 165.8 L211.5 166.2 L210.7 166.0 L209.9 166.0 L209.1 165.2 L208.3 165.1 L207.5 165.6 L206.7 165.2 L205.9 165.4 L205.1 165.9 L204.3 166.4 L203.5 166.2 L202.7 165.7 L201.9 165.1 L201.1 165.3 L200.3 165.2 L199.5 164.7 L198.7 165.0 L197.9 165.6 L197.1 165.7 L196.3 165.9 L195.5 165.4 L194.7 165.3 L193.9 164.7 L193.1 164.7 L192.3 165.5 L191.5 165.9 L190.7 165.8 L189.9 166.3 L189.1 166.3 L188.3 165.5 L187.5 165.4 L186.7 165.6 L185.9 165.5 L185.1 165.5 L184.3 165.7 L183.5 166.1 L182.7 165.6 L181.9 165.7 L181.1 165.2 L180.3 164.4 L179.5 165.1 L178.7 164.9 L177.9 165.1 L177.1 165.8 L176.3 165.8 L175.5 165.8 L174.7 165.2 L173.9 165.2 L173.1 165.6 L172.3 165.3 L171.5 165.3 L170.7 165.5 L169.9 166.3 L169.1 166.6 L168.3 165.7 L167.5 165.1 L166.7 164.8 L165.9 165.1 L165.1 165.0 L164.3 164.9 L163.5 165.4 L162.7 166.1 L161.9 166.0 L161.1 165.5 L160.3 165.1 L159.5 165.0 L158.7 165.3 L157.9 165.6 L157.1 166.0 L156.3 165.8 L155.5 166.1 L154.7 166.0 L153.9 166.3 L153.1 165.2 L152.3 165.1 L151.5 164.9 L150.7 165.2 L149.9 166.0 L149.1 165.5 L148.3 166.2 L147.5 166.0 L146.7 165.5 L145.9 165.3 L145.1 164.4 L144.3 164.7 L143.5 164.7 L142.7 165.8 L141.9 165.5 L141.1 165.6 L140.3 165.9 L139.5 165.6 L138.7 165.0 L137.9 165.0 L137.1 165.7 L136.3 165.5 L135.5 166.1 L134.7 166.1 L133.9 166.2 L133.1 165.8 L132.3 165.1 L131.5 164.9 L130.7 164.4 L129.9 164.5 L129.1 165.3 L128.3 165.9 L127.5 165.5 L126.7 165.6 L125.9 165.4 L125.1 164.9 L124.3 165.4 L123.5 164.9 L122.7 165.2 L121.9 166.0 L121.1 166.1 L120.3 165.9 L119.5 166.5 L118.7 165.4 L117.9 165.8 L117.1 165.1 L116.3 165.5 L115.5 165.1 L114.7 165.6 L113.9 165.8 L113.1 166.1 L112.3 165.5 L111.5 164.8 L110.7 165.2 L109.9 165.1 L109.1 165.4 L108.3 165.1 L107.5 165.5 L106.7 166.5 L105.9 166.0 L105.1 166.0 L104.3 166.0 L103.5 165.2 L102.7 165.5 L101.9 165.1 L101.1 165.8 L100.3 165.6 L99.5 166.1 L98.7 165.6 L97.9 165.2 L97.1 164.9 L96.3 164.5 L95.5 164.8 L94.7 164.7 L93.9 165.3 L93.1 165.8 L92.3 165.5 L91.5 166.0 L90.7 165.4 L89.9 165.1 L89.1 165.2 L88.3 165.1 L87.5 165.5 L86.7 166.4 L85.9 166.6 L85.1 165.9 L84.3 166.1 L83.5 165.3 L82.7 165.6 L81.9 164.8 L81.1 165.4 L80.3 165.1 L79.5 165.3Z M566.2 126.3 L567.0 126.4 L567.8 126.4 L568.6 125.4 L569.4 125.7 L570.2 125.1 L571.0 125.4 L571.8 124.8 L572.6 126.0 L573.4 126.2 L574.2 126.1 L575.0 125.9 L575.8 125.8 L576.6 125.5 L577.4 125.3 L578.2 125.3 L578.7 126.2 L578.7 129.3 L578.2 129.3 L577.4 129.8 L576.6 129.7 L575.8 130.2 L575.0 130.2 L574.2 130.6 L573.4 130.2 L572.6 129.5 L571.8 129.5 L571.0 128.8 L570.2 129.3 L569.4 129.2 L568.6 129.7 L567.8 129.7 L567.0 130.4 L566.2 130.5Z M578.7 161.2 L579.5 161.6 L580.3 162.1 L581.1 162.1 L581.9 161.8 L582.7 161.6 L583.5 161.3 L584.3 160.7 L585.1 160.9 L585.9 161.1 L586.7 161.1 L587.5 161.6 L588.3 162.0 L589.1 161.9 L589.9 161.3 L590.7 160.7 L591.5 160.7 L592.3 160.7 L593.1 161.6 L593.9 162.4 L594.7 162.2 L595.5 161.9 L596.3 162.0 L597.1 161.7 L597.9 161.2 L598.7 161.3 L599.5 161.3 L600.3 161.3 L601.1 162.1 L601.9 161.9 L602.7 161.6 L603.5 161.0 L604.0 161.9 L604.0 165.1 L603.5 165.4 L602.7 166.0 L601.9 165.9 L601.1 165.6 L600.3 165.5 L599.5 165.6 L598.7 165.2 L597.9 165.2 L597.1 165.7 L596.3 166.5 L595.5 166.5 L594.7 166.2 L593.9 165.5 L593.1 165.9 L592.3 164.9 L591.5 165.3 L590.7 164.9 L589.9 165.0 L589.1 165.7 L588.3 165.5 L587.5 165.6 L586.7 165.6 L585.9 164.9 L585.1 164.9 L584.3 164.7 L583.5 165.2 L582.7 165.5 L581.9 166.4 L581.1 166.1 L580.3 166.5 L579.5 165.9 L578.7 165.0Z M604.6 125.3 L605.4 124.6 L606.2 125.1 L607.0 125.8 L607.8 125.5 L608.6 126.2 L609.4 126.0 L610.2 126.0 L611.0 125.6 L611.8 126.0 L612.6 125.6 L613.4 126.0 L614.2 125.9 L615.0 126.4 L615.8 126.3 L616.6 126.4 L617.1 126.2 L617.1 129.3 L616.6 130.6 L615.8 130.0 L615.0 130.7 L614.2 130.1 L613.4 129.4 L612.6 129.6 L611.8 129.5 L611.0 129.9 L610.2 130.7 L609.4 130.5 L608.6 129.9 L607.8 130.2 L607.0 129.3 L606.2 129.4 L605.4 128.9 L604.6 129.3Z M617.1 162.0 L617.9 161.8 L618.7 160.7 L619.5 160.6 L620.3 160.8 L621.1 161.3 L621.9 161.4 L622.7 161.6 L623.5 162.1 L624.3 161.4 L625.1 161.7 L625.9 161.1 L626.7 161.0 L627.5 161.8 L628.3 161.5 L629.1 161.9 L629.6 161.9 L629.6 165.1 L629.1 166.0 L628.3 165.6 L627.5 164.9 L626.7 165.4 L625.9 165.4 L625.1 165.0 L624.3 165.2 L623.5 165.4 L622.7 165.6 L621.9 165.9 L621.1 165.2 L620.3 164.9 L619.5 164.5 L618.7 165.1 L617.9 165.2 L617.1 166.0Z M630.2 126.9 L631.0 126.8 L631.8 126.0 L632.6 125.7 L633.4 125.8 L634.2 125.3 L635.0 125.6 L635.8 126.1 L636.6 125.6 L637.4 126.2 L638.2 125.5 L639.0 125.3 L639.8 125.2 L640.6 125.3 L641.4 125.1 L642.2 125.9 L642.7 126.2 L642.7 129.3 L642.2 130.1 L641.4 129.1 L640.6 129.0 L639.8 129.6 L639.0 129.8 L638.2 129.6 L637.4 130.4 L636.6 130.3 L635.8 129.4 L635.0 129.7 L634.2 129.8 L633.4 129.7 L632.6 129.5 L631.8 129.9 L631.0 130.8 L630.2 130.4Z M642.7 161.7 L643.5 162.3 L644.3 162.3 L645.1 161.6 L645.9 161.7 L646.7 161.4 L647.5 161.4 L648.3 161.7 L649.1 161.8 L649.9 162.2 L650.7 162.3 L651.5 161.8 L652.3 161.9 L653.1 161.5 L653.9 160.5 L654.7 160.8 L655.2 161.9 L655.2 165.1 L654.7 165.0 L653.9 164.5 L653.1 164.9 L652.3 165.8 L651.5 165.8 L650.7 165.6 L649.9 165.7 L649.1 165.4 L648.3 165.7 L647.5 164.9 L646.7 165.3 L645.9 165.4 L645.1 165.8 L644.3 165.9 L643.5 165.7 L642.7 166.0Z M655.8 125.0 L656.6 125.8 L657.4 126.1 L658.2 126.4 L659.0 126.0 L659.8 125.8 L660.6 125.4 L661.4 125.1 L662.2 125.8 L663.0 125.9 L663.8 126.0 L664.6 126.5 L665.4 126.7 L666.2 126.3 L667.0 125.7 L667.8 125.5 L668.6 125.5 L669.4 125.5 L670.2 125.9 L671.0 126.0 L671.8 126.2 L672.6 126.1 L673.4 126.0 L674.2 125.5 L675.0 124.8 L675.8 124.9 L676.6 125.9 L677.4 126.4 L678.2 126.2 L679.0 126.6 L679.8 126.3 L680.6 125.8 L681.4 125.7 L682.2 125.9 L683.0 125.4 L683.8 126.2 L684.6 126.3 L685.4 126.4 L686.2 126.6 L687.0 125.8 L687.8 125.2 L688.6 124.9 L689.4 125.1 L690.2 125.3 L691.0 125.2 L691.8 126.1 L692.6 125.9 L693.4 126.6 L694.2 126.4 L695.0 126.1 L695.8 125.4 L696.6 125.4 L697.4 125.6 L698.2 126.3 L699.0 126.0 L699.8 126.1 L700.6 126.1 L701.4 125.9 L702.2 125.9 L703.0 125.3 L703.8 124.8 L704.6 125.1 L705.4 125.5 L706.2 126.1 L707.0 125.6 L707.8 125.8 L708.6 126.0 L709.4 125.4 L710.2 125.4 L711.0 125.2 L711.8 126.0 L712.6 126.2 L713.4 126.1 L714.2 126.7 L715.0 126.7 L715.8 126.1 L716.6 125.6 L717.4 125.8 L718.2 125.4 L719.0 125.5 L719.8 126.4 L720.6 126.2 L721.4 126.4 L722.2 126.0 L723.0 125.4 L723.8 125.2 L724.6 125.2 L725.4 125.7 L726.2 125.3 L727.0 126.5 L727.8 125.9 L728.6 126.6 L729.4 126.1 L730.2 125.7 L731.0 125.2 L731.8 125.5 L732.6 125.8 L733.4 126.4 L734.2 126.8 L735.0 126.1 L735.8 126.4 L736.6 125.4 L736.8 126.2 L736.8 129.3 L736.6 130.1 L735.8 130.3 L735.0 130.2 L734.2 130.7 L733.4 129.9 L732.6 129.7 L731.8 130.0 L731.0 129.7 L730.2 129.3 L729.4 129.8 L728.6 130.3 L727.8 130.4 L727.0 130.3 L726.2 130.0 L725.4 128.9 L724.6 128.8 L723.8 129.0 L723.0 129.0 L722.2 129.9 L721.4 129.8 L720.6 129.9 L719.8 129.8 L719.0 130.1 L718.2 129.5 L717.4 129.6 L716.6 129.9 L715.8 130.3 L715.0 130.4 L714.2 130.9 L713.4 130.4 L712.6 130.2 L711.8 129.6 L711.0 129.6 L710.2 128.9 L709.4 129.1 L708.6 129.5 L707.8 129.7 L707.0 130.1 L706.2 130.0 L705.4 129.9 L704.6 128.9 L703.8 128.8 L703.0 129.2 L702.2 129.7 L701.4 129.9 L700.6 130.6 L699.8 130.7 L699.0 130.4 L698.2 129.8 L697.4 130.1 L696.6 129.5 L695.8 129.2 L695.0 130.2 L694.2 130.3 L693.4 130.0 L692.6 130.3 L691.8 129.5 L691.0 129.7 L690.2 128.7 L689.4 129.2 L688.6 128.9 L687.8 129.5 L687.0 129.6 L686.2 130.0 L685.4 130.1 L684.6 129.8 L683.8 129.4 L683.0 129.8 L682.2 129.9 L681.4 129.5 L680.6 130.0 L679.8 130.2 L679.0 130.7 L678.2 130.2 L677.4 130.1 L676.6 129.4 L675.8 129.6 L675.0 129.4 L674.2 129.3 L673.4 129.9 L672.6 129.7 L671.8 129.6 L671.0 129.9 L670.2 129.6 L669.4 129.5 L668.6 129.6 L667.8 129.0 L667.0 129.6 L666.2 130.4 L665.4 130.8 L664.6 130.6 L663.8 130.0 L663.0 129.7 L662.2 129.4 L661.4 129.6 L660.6 129.3 L659.8 129.5 L659.0 129.8 L658.2 130.6 L657.4 130.4 L656.6 129.9 L655.8 129.0Z" fill="#f4f03c"/>
<text x="63.4" y="176.8" font-size="10.6" fill="#e8e874" font-weight="bold" text-anchor="middle" stroke="#e8e874" stroke-width="0.25">0</text>
<text x="76.24" y="176.8" font-size="10.6" fill="#e8e874" font-weight="bold" text-anchor="middle" stroke="#e8e874" stroke-width="0.25">1</text>
<text x="89.08" y="176.8" font-size="10.6" fill="#e8e874" font-weight="bold" text-anchor="middle" stroke="#e8e874" stroke-width="0.25">0</text>
<text x="101.91999999999999" y="176.8" font-size="10.6" fill="#e8e874" font-weight="bold" text-anchor="middle" stroke="#e8e874" stroke-width="0.25">0</text>
<text x="114.75999999999999" y="176.8" font-size="10.6" fill="#e8e874" font-weight="bold" text-anchor="middle" stroke="#e8e874" stroke-width="0.25">0</text>
<text x="127.6" y="176.8" font-size="10.6" fill="#e8e874" font-weight="bold" text-anchor="middle" stroke="#e8e874" stroke-width="0.25">0</text>
<text x="140.44" y="176.8" font-size="10.6" fill="#e8e874" font-weight="bold" text-anchor="middle" stroke="#e8e874" stroke-width="0.25">0</text>
<text x="153.28" y="176.8" font-size="10.6" fill="#e8e874" font-weight="bold" text-anchor="middle" stroke="#e8e874" stroke-width="0.25">0</text>
<text x="166.12" y="176.8" font-size="10.6" fill="#e8e874" font-weight="bold" text-anchor="middle" stroke="#e8e874" stroke-width="0.25">0</text>
<text x="178.96" y="176.8" font-size="10.6" fill="#e8e874" font-weight="bold" text-anchor="middle" stroke="#e8e874" stroke-width="0.25">0</text>
<text x="191.8" y="176.8" font-size="10.6" fill="#e8e874" font-weight="bold" text-anchor="middle" stroke="#e8e874" stroke-width="0.25">0</text>
<text x="204.64000000000001" y="176.8" font-size="10.6" fill="#e8e874" font-weight="bold" text-anchor="middle" stroke="#e8e874" stroke-width="0.25">0</text>
<text x="217.48" y="176.8" font-size="10.6" fill="#e8e874" font-weight="bold" text-anchor="middle" stroke="#e8e874" stroke-width="0.25">0</text>
<text x="230.32" y="176.8" font-size="10.6" fill="#e8e874" font-weight="bold" text-anchor="middle" stroke="#e8e874" stroke-width="0.25">0</text>
<text x="243.16" y="176.8" font-size="10.6" fill="#e8e874" font-weight="bold" text-anchor="middle" stroke="#e8e874" stroke-width="0.25">0</text>
<text x="256.0" y="176.8" font-size="10.6" fill="#e8e874" font-weight="bold" text-anchor="middle" stroke="#e8e874" stroke-width="0.25">0</text>
<text x="268.84" y="176.8" font-size="10.6" fill="#e8e874" font-weight="bold" text-anchor="middle" stroke="#e8e874" stroke-width="0.25">0</text>
<text x="281.68" y="176.8" font-size="10.6" fill="#e8e874" font-weight="bold" text-anchor="middle" stroke="#e8e874" stroke-width="0.25">0</text>
<text x="294.52" y="176.8" font-size="10.6" fill="#e8e874" font-weight="bold" text-anchor="middle" stroke="#e8e874" stroke-width="0.25">0</text>
<text x="307.36" y="176.8" font-size="10.6" fill="#e8e874" font-weight="bold" text-anchor="middle" stroke="#e8e874" stroke-width="0.25">0</text>
<text x="320.2" y="176.8" font-size="10.6" fill="#e8e874" font-weight="bold" text-anchor="middle" stroke="#e8e874" stroke-width="0.25">0</text>
<text x="333.03999999999996" y="176.8" font-size="10.6" fill="#e8e874" font-weight="bold" text-anchor="middle" stroke="#e8e874" stroke-width="0.25">0</text>
<text x="345.88" y="176.8" font-size="10.6" fill="#e8e874" font-weight="bold" text-anchor="middle" stroke="#e8e874" stroke-width="0.25">0</text>
<text x="358.71999999999997" y="176.8" font-size="10.6" fill="#e8e874" font-weight="bold" text-anchor="middle" stroke="#e8e874" stroke-width="0.25">0</text>
<text x="371.55999999999995" y="176.8" font-size="10.6" fill="#e8e874" font-weight="bold" text-anchor="middle" stroke="#e8e874" stroke-width="0.25">0</text>
<text x="384.4" y="176.8" font-size="10.6" fill="#e8e874" font-weight="bold" text-anchor="middle" stroke="#e8e874" stroke-width="0.25">0</text>
<text x="397.23999999999995" y="176.8" font-size="10.6" fill="#e8e874" font-weight="bold" text-anchor="middle" stroke="#e8e874" stroke-width="0.25">0</text>
<text x="410.08" y="176.8" font-size="10.6" fill="#e8e874" font-weight="bold" text-anchor="middle" stroke="#e8e874" stroke-width="0.25">0</text>
<text x="422.91999999999996" y="176.8" font-size="10.6" fill="#e8e874" font-weight="bold" text-anchor="middle" stroke="#e8e874" stroke-width="0.25">0</text>
<text x="435.76" y="176.8" font-size="10.6" fill="#e8e874" font-weight="bold" text-anchor="middle" stroke="#e8e874" stroke-width="0.25">0</text>
<text x="448.59999999999997" y="176.8" font-size="10.6" fill="#e8e874" font-weight="bold" text-anchor="middle" stroke="#e8e874" stroke-width="0.25">0</text>
<text x="461.44" y="176.8" font-size="10.6" fill="#e8e874" font-weight="bold" text-anchor="middle" stroke="#e8e874" stroke-width="0.25">0</text>
<text x="474.28" y="176.8" font-size="10.6" fill="#e8e874" font-weight="bold" text-anchor="middle" stroke="#e8e874" stroke-width="0.25">0</text>
<text x="487.11999999999995" y="176.8" font-size="10.6" fill="#e8e874" font-weight="bold" text-anchor="middle" stroke="#e8e874" stroke-width="0.25">0</text>
<text x="499.96" y="176.8" font-size="10.6" fill="#e8e874" font-weight="bold" text-anchor="middle" stroke="#e8e874" stroke-width="0.25">0</text>
<text x="512.8" y="176.8" font-size="10.6" fill="#e8e874" font-weight="bold" text-anchor="middle" stroke="#e8e874" stroke-width="0.25">0</text>
<text x="525.64" y="176.8" font-size="10.6" fill="#e8e874" font-weight="bold" text-anchor="middle" stroke="#e8e874" stroke-width="0.25">0</text>
<text x="538.48" y="176.8" font-size="10.6" fill="#e8e874" font-weight="bold" text-anchor="middle" stroke="#e8e874" stroke-width="0.25">0</text>
<text x="551.32" y="176.8" font-size="10.6" fill="#e8e874" font-weight="bold" text-anchor="middle" stroke="#e8e874" stroke-width="0.25">0</text>
<text x="564.16" y="176.8" font-size="10.6" fill="#e8e874" font-weight="bold" text-anchor="middle" stroke="#e8e874" stroke-width="0.25">0</text>
<text x="577.0" y="176.8" font-size="10.6" fill="#e8e874" font-weight="bold" text-anchor="middle" stroke="#e8e874" stroke-width="0.25">1</text>
<text x="589.8399999999999" y="176.8" font-size="10.6" fill="#e8e874" font-weight="bold" text-anchor="middle" stroke="#e8e874" stroke-width="0.25">0</text>
<text x="602.68" y="176.8" font-size="10.6" fill="#e8e874" font-weight="bold" text-anchor="middle" stroke="#e8e874" stroke-width="0.25">0</text>
<text x="615.52" y="176.8" font-size="10.6" fill="#e8e874" font-weight="bold" text-anchor="middle" stroke="#e8e874" stroke-width="0.25">1</text>
<text x="628.36" y="176.8" font-size="10.6" fill="#e8e874" font-weight="bold" text-anchor="middle" stroke="#e8e874" stroke-width="0.25">0</text>
<text x="641.1999999999999" y="176.8" font-size="10.6" fill="#e8e874" font-weight="bold" text-anchor="middle" stroke="#e8e874" stroke-width="0.25">1</text>
<text x="654.04" y="176.8" font-size="10.6" fill="#e8e874" font-weight="bold" text-anchor="middle" stroke="#e8e874" stroke-width="0.25">0</text>
<text x="666.88" y="176.8" font-size="10.6" fill="#e8e874" font-weight="bold" text-anchor="middle" stroke="#e8e874" stroke-width="0.25">1</text>
<path d="M59.6 186.8 L62.4 179.2 L69.60000000000001 179.2 L72.4 186.8 L69.60000000000001 194.4 L62.4 194.4 Z" fill="#ffff14" stroke="#000" stroke-width="0.7"/>
<text x="66.0" y="190.6" font-size="10.2" fill="#1e1e00" font-weight="bold" textLength="5.6" lengthAdjust="spacingAndGlyphs" text-anchor="middle" >S</text>
<path d="M72.4 186.8 L75.2 179.2 L82.60000000000001 179.2 L85.4 186.8 L82.60000000000001 194.4 L75.2 194.4 Z" fill="#ffff14" stroke="#000" stroke-width="0.7"/>
<text x="78.9" y="190.6" font-size="10.2" fill="#1e1e00" font-weight="bold" textLength="5.8" lengthAdjust="spacingAndGlyphs" text-anchor="middle" >T</text>
<path d="M85.4 186.8 L88.2 179.2 L159.6 179.2 L162.4 186.8 L159.6 194.4 L88.2 194.4 Z" fill="#ffff14" stroke="#000" stroke-width="0.7"/>
<text x="123.9" y="190.6" font-size="10.2" fill="#1e1e00" font-weight="bold" textLength="65.5" lengthAdjust="spacingAndGlyphs" text-anchor="middle" >Command I...</text>
<path d="M162.4 186.8 L165.20000000000002 179.2 L570.2 179.2 L573 186.8 L570.2 194.4 L165.20000000000002 194.4 Z" fill="#ffff14" stroke="#000" stroke-width="0.7"/>
<text x="367.7" y="190.6" font-size="10.2" fill="#1e1e00" font-weight="bold" textLength="111" lengthAdjust="spacingAndGlyphs" text-anchor="middle" >Argument = 0x00000000</text>
<path d="M573 186.8 L575.8 179.2 L659.8000000000001 179.2 L662.6 186.8 L659.8000000000001 194.4 L575.8 194.4 Z" fill="#ffff14" stroke="#000" stroke-width="0.7"/>
<text x="617.8" y="190.6" font-size="10.2" fill="#1e1e00" textLength="60" lengthAdjust="spacingAndGlyphs" text-anchor="middle" >CRC7 = 0x4A</text>
<path d="M662.6 186.8 L665.4 179.2 L672.4000000000001 179.2 L675.2 186.8 L672.4000000000001 194.4 L665.4 194.4 Z" fill="#ffff14" stroke="#000" stroke-width="0.7"/>
<text x="668.9000000000001" y="190.6" font-size="10.2" fill="#1e1e00" textLength="6" lengthAdjust="spacingAndGlyphs" text-anchor="middle" >E</text>
<path d="M66.3 204.0 L66.6 237.4 M71.9 237.4 L74.1 204.0 M79.1 204.0 L79.4 237.4 M84.7 237.4 L86.9 204.0 M91.9 204.0 L92.2 237.4 M97.5 237.4 L99.7 204.0 M104.7 204.0 L105.0 237.4 M110.3 237.4 L112.5 204.0 M117.5 204.0 L117.8 237.4 M123.1 237.4 L125.3 204.0 M130.3 204.0 L130.6 237.4 M135.9 237.4 L138.1 204.0 M143.1 204.0 L143.4 237.4 M148.7 237.4 L150.9 204.0 M155.9 204.0 L156.2 237.4 M161.5 237.4 L163.7 204.0 M168.7 204.0 L169.0 237.4 M174.3 237.4 L176.5 204.0 M181.5 204.0 L181.8 237.4 M187.1 237.4 L189.3 204.0 M194.3 204.0 L194.6 237.4 M199.9 237.4 L202.1 204.0 M207.1 204.0 L207.4 237.4 M212.7 237.4 L214.9 204.0 M219.9 204.0 L220.2 237.4 M225.5 237.4 L227.7 204.0 M232.7 204.0 L233.0 237.4 M238.3 237.4 L240.5 204.0 M245.5 204.0 L245.8 237.4 M251.1 237.4 L253.3 204.0 M258.3 204.0 L258.6 237.4 M263.9 237.4 L266.1 204.0 M271.1 204.0 L271.4 237.4 M276.7 237.4 L278.9 204.0 M283.9 204.0 L284.2 237.4 M289.5 237.4 L291.7 204.0 M296.7 204.0 L297.0 237.4 M302.3 237.4 L304.5 204.0 M309.5 204.0 L309.8 237.4 M315.1 237.4 L317.3 204.0 M322.3 204.0 L322.6 237.4 M327.9 237.4 L330.1 204.0 M335.1 204.0 L335.4 237.4 M340.7 237.4 L342.9 204.0 M347.9 204.0 L348.2 237.4 M353.5 237.4 L355.7 204.0 M360.7 204.0 L361.0 237.4 M366.3 237.4 L368.5 204.0 M373.5 204.0 L373.8 237.4 M379.1 237.4 L381.3 204.0 M386.3 204.0 L386.6 237.4 M391.9 237.4 L394.1 204.0 M399.1 204.0 L399.4 237.4 M404.7 237.4 L406.9 204.0 M411.9 204.0 L412.2 237.4 M417.5 237.4 L419.7 204.0 M424.7 204.0 L425.0 237.4 M430.3 237.4 L432.5 204.0 M437.5 204.0 L437.8 237.4 M443.1 237.4 L445.3 204.0 M450.3 204.0 L450.6 237.4 M455.9 237.4 L458.1 204.0 M463.1 204.0 L463.4 237.4 M468.7 237.4 L470.9 204.0 M475.9 204.0 L476.2 237.4 M481.5 237.4 L483.7 204.0 M488.7 204.0 L489.0 237.4 M494.3 237.4 L496.5 204.0 M501.5 204.0 L501.8 237.4 M507.1 237.4 L509.3 204.0 M514.3 204.0 L514.6 237.4 M519.9 237.4 L522.1 204.0 M527.1 204.0 L527.4 237.4 M532.7 237.4 L534.9 204.0 M539.9 204.0 L540.2 237.4 M545.5 237.4 L547.7 204.0 M552.7 204.0 L553.0 237.4 M558.3 237.4 L560.5 204.0 M565.5 204.0 L565.8 237.4 M571.1 237.4 L573.3 204.0 M578.3 204.0 L578.6 237.4 M583.9 237.4 L586.1 204.0 M591.1 204.0 L591.4 237.4 M596.7 237.4 L598.9 204.0 M603.9 204.0 L604.2 237.4 M609.5 237.4 L611.7 204.0 M616.7 204.0 L617.0 237.4 M622.3 237.4 L624.5 204.0 M629.5 204.0 L629.8 237.4 M635.1 237.4 L637.3 204.0 M642.3 204.0 L642.6 237.4 M647.9 237.4 L650.1 204.0 M655.1 204.0 L655.4 237.4 M660.7 237.4 L662.9 204.0 M667.9 204.0 L668.2 237.4 M673.5 237.4 L675.7 204.0 M680.7 204.0 L681.0 237.4 M686.3 237.4 L688.5 204.0 M693.5 204.0 L693.8 237.4 M699.1 237.4 L701.3 204.0 M706.3 204.0 L706.6 237.4 M711.9 237.4 L714.1 204.0 M719.1 204.0 L719.4 237.4 M724.7 237.4 L726.9 204.0 M731.9 204.0 L732.2 237.4" fill="none" stroke="#c81212" stroke-width="1.1" stroke-linecap="round"/>
<path d="M59.3 202.9 L60.1 202.4 L60.9 202.8 L61.7 202.4 L62.5 202.8 L63.3 202.8 L64.1 202.9 L64.9 202.6 L65.7 202.4 L66.5 202.3 L66.6 203.1 L66.6 204.9 L66.5 205.7 L65.7 205.5 L64.9 205.5 L64.1 205.0 L63.3 205.6 L62.5 205.4 L61.7 205.2 L60.9 205.1 L60.1 205.5 L59.3 205.6Z M66.3 236.1 L67.1 236.3 L67.9 236.0 L68.7 235.9 L69.5 236.1 L70.3 236.4 L71.1 236.1 L71.9 235.9 L72.2 236.5 L72.2 238.3 L71.9 238.4 L71.1 238.5 L70.3 238.4 L69.5 239.1 L68.7 238.5 L67.9 238.4 L67.1 238.6 L66.3 238.7Z M73.8 202.4 L74.6 202.4 L75.4 202.8 L76.2 202.6 L77.0 202.8 L77.8 202.5 L78.6 202.3 L79.4 202.8 L79.4 203.1 L79.4 204.9 L79.4 205.3 L78.6 205.1 L77.8 205.6 L77.0 205.3 L76.2 205.3 L75.4 205.5 L74.6 205.3 L73.8 205.6Z M79.1 236.0 L79.9 236.3 L80.7 236.2 L81.5 235.7 L82.3 235.8 L83.1 235.7 L83.9 235.8 L84.7 235.9 L85.0 236.5 L85.0 238.3 L84.7 238.8 L83.9 238.4 L83.1 238.8 L82.3 239.1 L81.5 239.1 L80.7 238.7 L79.9 238.4 L79.1 238.6Z M86.6 202.8 L87.4 202.3 L88.2 202.5 L89.0 202.8 L89.8 203.0 L90.6 202.5 L91.4 203.0 L92.2 202.8 L92.2 203.1 L92.2 204.9 L92.2 205.4 L91.4 205.5 L90.6 205.3 L89.8 205.1 L89.0 205.7 L88.2 205.2 L87.4 205.3 L86.6 205.4Z M91.9 236.1 L92.7 236.0 L93.5 236.4 L94.3 235.7 L95.1 236.4 L95.9 236.2 L96.7 236.0 L97.5 236.1 L97.8 236.5 L97.8 238.3 L97.5 238.8 L96.7 238.6 L95.9 238.4 L95.1 239.0 L94.3 238.8 L93.5 238.5 L92.7 238.7 L91.9 238.8Z M99.4 202.9 L100.2 203.0 L101.0 202.6 L101.8 202.7 L102.6 202.7 L103.4 202.6 L104.2 202.4 L105.0 202.3 L105.0 203.1 L105.0 204.9 L105.0 205.5 L104.2 205.0 L103.4 205.5 L102.6 205.6 L101.8 205.0 L101.0 205.0 L100.2 205.4 L99.4 205.4Z M104.7 236.4 L105.5 236.1 L106.3 235.7 L107.1 235.8 L107.9 235.8 L108.7 236.3 L109.5 236.4 L110.3 236.3 L110.6 236.5 L110.6 238.3 L110.3 238.6 L109.5 238.8 L108.7 238.6 L107.9 238.4 L107.1 238.5 L106.3 238.8 L105.5 238.5 L104.7 239.0Z M112.2 202.5 L113.0 202.3 L113.8 202.4 L114.6 202.3 L115.4 202.9 L116.2 202.8 L117.0 202.5 L117.8 203.0 L117.8 203.1 L117.8 204.9 L117.8 205.2 L117.0 205.6 L116.2 205.6 L115.4 205.5 L114.6 205.6 L113.8 205.4 L113.0 205.4 L112.2 205.3Z M117.5 235.9 L118.3 235.9 L119.1 236.0 L119.9 236.0 L120.7 236.4 L121.5 235.9 L122.3 236.3 L123.1 235.8 L123.4 236.5 L123.4 238.3 L123.1 238.8 L122.3 238.7 L121.5 238.6 L120.7 239.1 L119.9 239.0 L119.1 238.4 L118.3 238.4 L117.5 239.1Z M125.0 203.0 L125.8 203.0 L126.6 202.9 L127.4 202.8 L128.2 202.7 L129.0 202.3 L129.8 202.5 L130.6 203.1 L130.6 204.9 L129.8 205.6 L129.0 205.4 L128.2 205.1 L127.4 205.5 L126.6 205.4 L125.8 205.6 L125.0 205.0Z M130.3 235.7 L131.1 236.2 L131.9 236.0 L132.7 235.8 L133.5 236.3 L134.3 235.9 L135.1 236.1 L135.9 235.8 L136.2 236.5 L136.2 238.3 L135.9 238.7 L135.1 238.5 L134.3 238.7 L133.5 239.0 L132.7 238.4 L131.9 239.0 L131.1 238.5 L130.3 238.4Z M137.8 202.4 L138.6 203.0 L139.4 202.9 L140.2 202.6 L141.0 202.9 L141.8 202.7 L142.6 202.7 L143.4 203.1 L143.4 204.9 L142.6 205.2 L141.8 205.4 L141.0 205.2 L140.2 205.0 L139.4 205.7 L138.6 205.2 L137.8 205.4Z M143.1 236.4 L143.9 236.2 L144.7 236.1 L145.5 236.4 L146.3 235.9 L147.1 236.2 L147.9 236.2 L148.7 236.0 L149.0 236.5 L149.0 238.3 L148.7 239.1 L147.9 238.8 L147.1 238.8 L146.3 238.6 L145.5 238.5 L144.7 239.1 L143.9 238.4 L143.1 238.8Z M150.6 202.3 L151.4 202.6 L152.2 202.4 L153.0 202.5 L153.8 202.8 L154.6 202.4 L155.4 202.3 L156.2 203.1 L156.2 204.9 L155.4 205.5 L154.6 205.6 L153.8 205.2 L153.0 205.5 L152.2 205.6 L151.4 205.6 L150.6 205.0Z M155.9 236.2 L156.7 235.9 L157.5 235.9 L158.3 236.0 L159.1 236.4 L159.9 236.2 L160.7 236.1 L161.5 236.3 L161.8 236.5 L161.8 238.3 L161.5 238.5 L160.7 238.6 L159.9 239.1 L159.1 238.6 L158.3 238.7 L157.5 238.6 L156.7 238.8 L155.9 239.0Z M163.4 202.8 L164.2 203.0 L165.0 202.7 L165.8 202.6 L166.6 202.9 L167.4 202.8 L168.2 202.5 L169.0 203.1 L169.0 204.9 L168.2 205.4 L167.4 205.2 L166.6 205.0 L165.8 205.2 L165.0 205.3 L164.2 205.6 L163.4 205.1Z M168.7 235.7 L169.5 235.7 L170.3 236.4 L171.1 236.0 L171.9 236.2 L172.7 236.1 L173.5 236.4 L174.3 235.7 L174.6 236.5 L174.6 238.3 L174.3 238.6 L173.5 238.7 L172.7 239.0 L171.9 239.0 L171.1 239.1 L170.3 238.5 L169.5 238.8 L168.7 238.6Z M176.2 202.8 L177.0 202.9 L177.8 202.5 L178.6 202.7 L179.4 202.6 L180.2 202.5 L181.0 202.5 L181.8 203.1 L181.8 204.9 L181.0 205.7 L180.2 205.1 L179.4 205.6 L178.6 205.1 L177.8 205.1 L177.0 205.2 L176.2 205.0Z M181.5 236.0 L182.3 235.8 L183.1 236.2 L183.9 236.3 L184.7 235.7 L185.5 235.7 L186.3 236.2 L187.1 235.9 L187.4 236.5 L187.4 238.3 L187.1 238.7 L186.3 238.9 L185.5 238.5 L184.7 238.9 L183.9 238.8 L183.1 238.5 L182.3 239.1 L181.5 238.4Z M189.0 202.5 L189.8 203.0 L190.6 203.0 L191.4 202.8 L192.2 202.6 L193.0 202.7 L193.8 202.3 L194.6 203.1 L194.6 204.9 L193.8 205.4 L193.0 205.0 L192.2 205.2 L191.4 205.3 L190.6 205.5 L189.8 205.3 L189.0 205.2Z M194.3 235.7 L195.1 236.0 L195.9 236.2 L196.7 236.3 L197.5 235.8 L198.3 235.8 L199.1 236.0 L199.9 236.0 L200.2 236.5 L200.2 238.3 L199.9 238.9 L199.1 238.8 L198.3 238.7 L197.5 238.4 L196.7 238.5 L195.9 238.4 L195.1 238.9 L194.3 238.4Z M201.8 202.6 L202.6 202.5 L203.4 202.5 L204.2 202.4 L205.0 202.4 L205.8 202.7 L206.6 202.6 L207.4 203.1 L207.4 204.9 L206.6 205.7 L205.8 205.2 L205.0 205.7 L204.2 205.2 L203.4 205.6 L202.6 205.2 L201.8 205.2Z M207.1 236.3 L207.9 236.1 L208.7 235.8 L209.5 235.7 L210.3 235.8 L211.1 236.4 L211.9 236.4 L212.7 236.0 L213.0 236.5 L213.0 238.3 L212.7 238.5 L211.9 238.8 L211.1 238.5 L210.3 238.4 L209.5 238.5 L208.7 238.6 L207.9 238.9 L207.1 238.4Z M214.6 202.3 L215.4 202.9 L216.2 202.5 L217.0 202.9 L217.8 202.4 L218.6 202.3 L219.4 202.5 L220.2 203.1 L220.2 204.9 L219.4 205.2 L218.6 205.3 L217.8 205.1 L217.0 205.0 L216.2 205.7 L215.4 205.1 L214.6 205.2Z M219.9 235.8 L220.7 236.2 L221.5 236.4 L222.3 236.4 L223.1 236.1 L223.9 236.4 L224.7 236.1 L225.5 235.7 L225.8 236.5 L225.8 238.3 L225.5 238.9 L224.7 239.1 L223.9 238.8 L223.1 239.0 L222.3 238.9 L221.5 238.9 L220.7 239.1 L219.9 238.7Z M227.4 202.9 L228.2 202.8 L229.0 202.9 L229.8 202.4 L230.6 202.8 L231.4 202.9 L232.2 202.9 L233.0 203.1 L233.0 204.9 L232.2 205.6 L231.4 205.4 L230.6 205.7 L229.8 205.5 L229.0 205.1 L228.2 205.3 L227.4 205.2Z M232.7 235.8 L233.5 235.8 L234.3 236.2 L235.1 236.1 L235.9 236.3 L236.7 236.0 L237.5 236.0 L238.3 236.3 L238.6 236.5 L238.6 238.3 L238.3 239.1 L237.5 239.1 L236.7 238.7 L235.9 238.9 L235.1 239.1 L234.3 238.6 L233.5 239.0 L232.7 238.6Z M240.2 202.8 L241.0 202.4 L241.8 202.4 L242.6 202.8 L243.4 203.0 L244.2 203.0 L245.0 202.9 L245.8 203.1 L245.8 204.9 L245.0 205.5 L244.2 205.7 L243.4 205.7 L242.6 205.0 L241.8 205.7 L241.0 205.1 L240.2 205.6Z M245.5 236.4 L246.3 235.9 L247.1 236.2 L247.9 235.9 L248.7 235.7 L249.5 236.3 L250.3 235.9 L251.1 236.0 L251.4 236.5 L251.4 238.3 L251.1 238.5 L250.3 238.4 L249.5 239.0 L248.7 238.4 L247.9 239.1 L247.1 239.1 L246.3 238.4 L245.5 238.5Z M253.0 202.7 L253.8 203.0 L254.6 202.8 L255.4 203.0 L256.2 202.9 L257.0 202.9 L257.8 202.9 L258.6 203.1 L258.6 204.9 L257.8 205.5 L257.0 205.5 L256.2 205.3 L255.4 205.3 L254.6 205.7 L253.8 205.7 L253.0 205.0Z M258.3 236.0 L259.1 236.2 L259.9 235.7 L260.7 236.3 L261.5 235.7 L262.3 236.2 L263.1 236.2 L263.9 236.4 L264.2 236.5 L264.2 238.3 L263.9 238.8 L263.1 238.4 L262.3 238.5 L261.5 238.9 L260.7 239.1 L259.9 238.6 L259.1 238.7 L258.3 238.4Z M265.8 202.7 L266.6 202.8 L267.4 202.5 L268.2 202.6 L269.0 202.5 L269.8 202.4 L270.6 202.7 L271.4 203.1 L271.4 204.9 L270.6 205.2 L269.8 205.5 L269.0 205.7 L268.2 205.4 L267.4 205.5 L266.6 205.0 L265.8 205.4Z M271.1 236.1 L271.9 236.1 L272.7 236.1 L273.5 235.7 L274.3 236.0 L275.1 236.2 L275.9 236.1 L276.7 236.3 L277.0 236.5 L277.0 238.3 L276.7 238.4 L275.9 238.5 L275.1 238.8 L274.3 239.1 L273.5 238.4 L272.7 238.5 L271.9 238.7 L271.1 239.1Z M278.6 202.4 L279.4 202.3 L280.2 202.5 L281.0 202.5 L281.8 202.8 L282.6 203.0 L283.4 202.4 L284.2 203.1 L284.2 204.9 L283.4 205.4 L282.6 205.5 L281.8 205.7 L281.0 205.4 L280.2 205.2 L279.4 205.0 L278.6 205.6Z M283.9 236.0 L284.7 236.3 L285.5 235.9 L286.3 235.9 L287.1 236.0 L287.9 235.9 L288.7 235.9 L289.5 236.3 L289.8 236.5 L289.8 238.3 L289.5 238.8 L288.7 238.8 L287.9 238.6 L287.1 238.8 L286.3 238.7 L285.5 238.7 L284.7 238.9 L283.9 239.1Z M291.4 202.8 L292.2 202.7 L293.0 202.6 L293.8 202.9 L294.6 202.3 L295.4 202.6 L296.2 202.4 L297.0 203.1 L297.0 204.9 L296.2 205.1 L295.4 205.4 L294.6 205.4 L293.8 205.1 L293.0 205.3 L292.2 205.5 L291.4 205.7Z M296.7 236.3 L297.5 236.1 L298.3 235.8 L299.1 235.8 L299.9 236.1 L300.7 235.8 L301.5 236.3 L302.3 236.4 L302.6 236.5 L302.6 238.3 L302.3 238.6 L301.5 238.6 L300.7 238.4 L299.9 239.0 L299.1 238.4 L298.3 239.1 L297.5 238.9 L296.7 239.0Z M304.2 202.4 L305.0 202.7 L305.8 202.7 L306.6 202.5 L307.4 202.7 L308.2 202.4 L309.0 202.5 L309.8 203.1 L309.8 204.9 L309.0 205.2 L308.2 205.1 L307.4 205.6 L306.6 205.3 L305.8 205.7 L305.0 205.0 L304.2 205.4Z M309.5 236.0 L310.3 236.2 L311.1 236.1 L311.9 236.3 L312.7 236.4 L313.5 235.9 L314.3 236.2 L315.1 235.8 L315.4 236.5 L315.4 238.3 L315.1 238.4 L314.3 238.5 L313.5 238.6 L312.7 238.5 L311.9 238.8 L311.1 238.4 L310.3 238.6 L309.5 238.5Z M317.0 202.5 L317.8 202.9 L318.6 202.4 L319.4 202.8 L320.2 202.7 L321.0 202.5 L321.8 202.7 L322.6 203.1 L322.6 204.9 L321.8 205.5 L321.0 205.2 L320.2 205.2 L319.4 205.0 L318.6 205.4 L317.8 205.3 L317.0 205.6Z M322.3 235.8 L323.1 236.1 L323.9 235.7 L324.7 235.7 L325.5 236.2 L326.3 236.2 L327.1 235.8 L327.9 236.0 L328.2 236.5 L328.2 238.3 L327.9 238.7 L327.1 238.7 L326.3 238.4 L325.5 238.9 L324.7 238.9 L323.9 238.5 L323.1 238.8 L322.3 238.6Z M329.8 202.3 L330.6 203.0 L331.4 202.7 L332.2 202.4 L333.0 202.7 L333.8 202.7 L334.6 202.6 L335.4 203.1 L335.4 204.9 L334.6 205.6 L333.8 205.3 L333.0 205.7 L332.2 205.3 L331.4 205.3 L330.6 205.4 L329.8 205.6Z M335.1 235.9 L335.9 236.1 L336.7 235.9 L337.5 235.8 L338.3 236.4 L339.1 236.4 L339.9 236.4 L340.7 235.8 L341.0 236.5 L341.0 238.3 L340.7 238.8 L339.9 238.4 L339.1 239.0 L338.3 238.5 L337.5 239.0 L336.7 238.8 L335.9 238.4 L335.1 238.9Z M342.6 203.0 L343.4 202.5 L344.2 203.0 L345.0 202.7 L345.8 202.3 L346.6 202.4 L347.4 202.8 L348.2 203.1 L348.2 204.9 L347.4 205.4 L346.6 205.1 L345.8 205.6 L345.0 205.4 L344.2 205.5 L343.4 205.3 L342.6 205.5Z M347.9 236.4 L348.7 236.2 L349.5 236.2 L350.3 235.8 L351.1 236.0 L351.9 236.4 L352.7 235.8 L353.5 235.8 L353.8 236.5 L353.8 238.3 L353.5 238.6 L352.7 239.0 L351.9 238.6 L351.1 238.7 L350.3 238.8 L349.5 238.6 L348.7 238.6 L347.9 239.1Z M355.4 202.9 L356.2 202.6 L357.0 202.7 L357.8 202.6 L358.6 202.4 L359.4 202.3 L360.2 203.0 L361.0 203.1 L361.0 204.9 L360.2 205.2 L359.4 205.4 L358.6 205.1 L357.8 205.2 L357.0 205.3 L356.2 205.2 L355.4 205.0Z M360.7 236.0 L361.5 236.0 L362.3 236.2 L363.1 236.2 L363.9 235.8 L364.7 236.1 L365.5 236.1 L366.3 236.4 L366.6 236.5 L366.6 238.3 L366.3 238.7 L365.5 239.1 L364.7 239.1 L363.9 238.8 L363.1 238.9 L362.3 239.0 L361.5 238.6 L360.7 238.7Z M368.2 202.5 L369.0 202.4 L369.8 202.6 L370.6 202.3 L371.4 202.4 L372.2 202.5 L373.0 202.8 L373.8 203.1 L373.8 204.9 L373.0 205.1 L372.2 205.5 L371.4 205.3 L370.6 205.4 L369.8 205.1 L369.0 205.0 L368.2 205.0Z M373.5 235.8 L374.3 235.7 L375.1 236.4 L375.9 235.8 L376.7 236.1 L377.5 236.2 L378.3 235.9 L379.1 236.4 L379.4 236.5 L379.4 238.3 L379.1 238.9 L378.3 238.5 L377.5 239.1 L376.7 238.9 L375.9 239.1 L375.1 238.4 L374.3 238.5 L373.5 238.5Z M381.0 203.0 L381.8 202.8 L382.6 202.6 L383.4 202.6 L384.2 202.3 L385.0 202.4 L385.8 202.4 L386.6 203.1 L386.6 204.9 L385.8 205.7 L385.0 205.1 L384.2 205.2 L383.4 205.1 L382.6 205.2 L381.8 205.1 L381.0 205.6Z M386.3 236.1 L387.1 236.1 L387.9 236.3 L388.7 236.4 L389.5 235.9 L390.3 235.9 L391.1 235.8 L391.9 235.7 L392.2 236.5 L392.2 238.3 L391.9 239.1 L391.1 238.4 L390.3 238.4 L389.5 238.7 L388.7 238.7 L387.9 238.8 L387.1 238.9 L386.3 238.4Z M393.8 202.3 L394.6 202.8 L395.4 202.4 L396.2 202.3 L397.0 202.7 L397.8 202.6 L398.6 203.0 L399.4 203.1 L399.4 204.9 L398.6 205.1 L397.8 205.4 L397.0 205.6 L396.2 205.0 L395.4 205.3 L394.6 205.2 L393.8 205.4Z M399.1 236.2 L399.9 235.8 L400.7 235.7 L401.5 236.0 L402.3 236.2 L403.1 235.9 L403.9 236.2 L404.7 236.3 L405.0 236.5 L405.0 238.3 L404.7 238.9 L403.9 238.7 L403.1 238.4 L402.3 239.1 L401.5 239.1 L400.7 238.4 L399.9 238.5 L399.1 239.1Z M406.6 202.9 L407.4 202.8 L408.2 202.6 L409.0 202.6 L409.8 202.6 L410.6 203.0 L411.4 203.0 L412.2 203.1 L412.2 204.9 L411.4 205.5 L410.6 205.4 L409.8 205.3 L409.0 205.6 L408.2 205.0 L407.4 205.0 L406.6 205.6Z M411.9 236.3 L412.7 236.2 L413.5 235.9 L414.3 236.3 L415.1 236.2 L415.9 235.8 L416.7 236.3 L417.5 235.7 L417.8 236.5 L417.8 238.3 L417.5 238.4 L416.7 238.4 L415.9 238.7 L415.1 239.0 L414.3 239.1 L413.5 238.5 L412.7 238.6 L411.9 238.8Z M419.4 202.7 L420.2 203.0 L421.0 202.9 L421.8 202.6 L422.6 202.9 L423.4 202.9 L424.2 202.9 L425.0 203.1 L425.0 204.9 L424.2 205.6 L423.4 205.1 L422.6 205.3 L421.8 205.2 L421.0 205.4 L420.2 205.3 L419.4 205.4Z M424.7 236.0 L425.5 236.4 L426.3 236.1 L427.1 236.0 L427.9 236.3 L428.7 236.3 L429.5 236.4 L430.3 236.0 L430.6 236.5 L430.6 238.3 L430.3 238.6 L429.5 238.7 L428.7 238.6 L427.9 239.0 L427.1 238.9 L426.3 239.0 L425.5 239.1 L424.7 239.1Z M432.2 202.3 L433.0 202.6 L433.8 202.6 L434.6 202.5 L435.4 202.9 L436.2 202.3 L437.0 202.6 L437.8 203.1 L437.8 204.9 L437.0 205.5 L436.2 205.0 L435.4 205.4 L434.6 205.0 L433.8 205.6 L433.0 205.1 L432.2 205.0Z M437.5 235.8 L438.3 235.8 L439.1 235.7 L439.9 235.7 L440.7 236.1 L441.5 236.3 L442.3 235.9 L443.1 236.2 L443.4 236.5 L443.4 238.3 L443.1 238.5 L442.3 238.5 L441.5 238.9 L440.7 238.4 L439.9 238.7 L439.1 238.4 L438.3 238.7 L437.5 238.6Z M445.0 202.9 L445.8 202.8 L446.6 202.3 L447.4 202.7 L448.2 202.4 L449.0 202.4 L449.8 202.9 L450.6 203.1 L450.6 204.9 L449.8 205.5 L449.0 205.5 L448.2 205.7 L447.4 205.3 L446.6 205.6 L445.8 205.7 L445.0 205.1Z M450.3 235.8 L451.1 236.4 L451.9 236.2 L452.7 235.7 L453.5 235.9 L454.3 235.8 L455.1 235.7 L455.9 235.8 L456.2 236.5 L456.2 238.3 L455.9 239.0 L455.1 238.9 L454.3 239.1 L453.5 238.5 L452.7 238.9 L451.9 238.5 L451.1 238.9 L450.3 239.0Z M457.8 202.6 L458.6 202.4 L459.4 202.4 L460.2 202.3 L461.0 202.3 L461.8 202.3 L462.6 202.8 L463.4 203.1 L463.4 204.9 L462.6 205.6 L461.8 205.6 L461.0 205.0 L460.2 205.4 L459.4 205.2 L458.6 205.6 L457.8 205.3Z M463.1 236.3 L463.9 236.1 L464.7 236.1 L465.5 235.9 L466.3 236.1 L467.1 235.8 L467.9 235.7 L468.7 236.1 L469.0 236.5 L469.0 238.3 L468.7 238.4 L467.9 239.0 L467.1 238.9 L466.3 239.0 L465.5 238.9 L464.7 239.1 L463.9 238.5 L463.1 238.5Z M470.6 202.5 L471.4 202.8 L472.2 202.4 L473.0 203.0 L473.8 203.0 L474.6 202.4 L475.4 202.6 L476.2 203.1 L476.2 204.9 L475.4 205.3 L474.6 205.3 L473.8 205.0 L473.0 205.3 L472.2 205.6 L471.4 205.4 L470.6 205.6Z M475.9 236.2 L476.7 236.2 L477.5 236.0 L478.3 236.4 L479.1 235.9 L479.9 235.9 L480.7 236.4 L481.5 236.4 L481.8 236.5 L481.8 238.3 L481.5 239.0 L480.7 238.9 L479.9 239.0 L479.1 238.7 L478.3 238.6 L477.5 238.6 L476.7 239.0 L475.9 238.5Z M483.4 202.9 L484.2 202.3 L485.0 202.9 L485.8 202.6 L486.6 202.7 L487.4 202.3 L488.2 202.3 L489.0 203.1 L489.0 204.9 L488.2 205.1 L487.4 205.4 L486.6 205.3 L485.8 205.7 L485.0 205.7 L484.2 205.2 L483.4 205.2Z M488.7 235.8 L489.5 236.0 L490.3 236.3 L491.1 236.1 L491.9 236.2 L492.7 236.4 L493.5 235.8 L494.3 236.1 L494.6 236.5 L494.6 238.3 L494.3 239.1 L493.5 238.8 L492.7 238.8 L491.9 238.6 L491.1 239.0 L490.3 239.1 L489.5 238.4 L488.7 238.5Z M496.2 202.3 L497.0 203.0 L497.8 202.7 L498.6 202.8 L499.4 202.5 L500.2 202.6 L501.0 202.3 L501.8 203.1 L501.8 204.9 L501.0 205.3 L500.2 205.5 L499.4 205.3 L498.6 205.5 L497.8 205.7 L497.0 205.4 L496.2 205.5Z M501.5 236.2 L502.3 236.4 L503.1 235.9 L503.9 236.1 L504.7 235.7 L505.5 235.9 L506.3 236.2 L507.1 235.7 L507.4 236.5 L507.4 238.3 L507.1 239.1 L506.3 238.5 L505.5 238.4 L504.7 238.9 L503.9 239.0 L503.1 238.8 L502.3 239.0 L501.5 239.1Z M509.0 202.9 L509.8 202.6 L510.6 202.7 L511.4 202.5 L512.2 202.4 L513.0 202.6 L513.8 202.3 L514.6 203.1 L514.6 204.9 L513.8 205.5 L513.0 205.3 L512.2 205.2 L511.4 205.2 L510.6 205.5 L509.8 205.0 L509.0 205.4Z M514.3 235.8 L515.1 236.1 L515.9 235.9 L516.7 236.2 L517.5 236.0 L518.3 235.8 L519.1 236.3 L519.9 235.7 L520.2 236.5 L520.2 238.3 L519.9 238.5 L519.1 238.8 L518.3 238.6 L517.5 239.0 L516.7 238.5 L515.9 238.9 L515.1 239.1 L514.3 238.9Z M521.8 202.5 L522.6 202.8 L523.4 202.8 L524.2 202.3 L525.0 202.9 L525.8 202.3 L526.6 202.8 L527.4 203.0 L527.4 203.1 L527.4 204.9 L527.4 205.2 L526.6 205.3 L525.8 205.1 L525.0 205.2 L524.2 205.7 L523.4 205.3 L522.6 205.0 L521.8 205.1Z M527.1 236.1 L527.9 235.7 L528.7 236.3 L529.5 236.1 L530.3 235.9 L531.1 236.2 L531.9 235.8 L532.7 236.0 L533.0 236.5 L533.0 238.3 L532.7 238.9 L531.9 238.7 L531.1 238.5 L530.3 239.0 L529.5 239.0 L528.7 239.1 L527.9 238.6 L527.1 238.7Z M534.6 202.4 L535.4 202.8 L536.2 202.6 L537.0 202.5 L537.8 202.4 L538.6 202.4 L539.4 202.8 L540.2 202.8 L540.2 203.1 L540.2 204.9 L540.2 205.1 L539.4 205.7 L538.6 205.4 L537.8 205.0 L537.0 205.2 L536.2 205.2 L535.4 205.7 L534.6 205.2Z M539.9 236.4 L540.7 235.8 L541.5 236.1 L542.3 236.4 L543.1 235.9 L543.9 235.9 L544.7 235.8 L545.5 235.7 L545.8 236.5 L545.8 238.3 L545.5 238.9 L544.7 238.7 L543.9 238.9 L543.1 239.1 L542.3 238.6 L541.5 239.0 L540.7 238.9 L539.9 238.8Z M547.4 202.8 L548.2 202.4 L549.0 202.9 L549.8 202.6 L550.6 202.5 L551.4 202.9 L552.2 203.0 L553.0 202.6 L553.0 203.1 L553.0 204.9 L553.0 205.6 L552.2 205.3 L551.4 205.2 L550.6 205.7 L549.8 205.4 L549.0 205.6 L548.2 205.2 L547.4 205.3Z M552.7 235.9 L553.5 236.1 L554.3 236.2 L555.1 235.8 L555.9 236.3 L556.7 235.8 L557.5 235.7 L558.3 235.9 L558.6 236.5 L558.6 238.3 L558.3 239.0 L557.5 239.1 L556.7 238.8 L555.9 238.9 L555.1 239.0 L554.3 239.0 L553.5 238.8 L552.7 238.8Z M560.2 202.5 L561.0 202.9 L561.8 202.5 L562.6 202.8 L563.4 202.6 L564.2 202.8 L565.0 202.9 L565.8 202.5 L565.8 203.1 L565.8 204.9 L565.8 205.7 L565.0 205.0 L564.2 205.1 L563.4 205.6 L562.6 205.0 L561.8 205.4 L561.0 205.5 L560.2 205.7Z M565.5 235.8 L566.3 235.9 L567.1 235.8 L567.9 236.4 L568.7 236.3 L569.5 236.4 L570.3 236.0 L571.1 236.4 L571.4 236.5 L571.4 238.3 L571.1 239.0 L570.3 239.0 L569.5 238.7 L568.7 238.6 L567.9 238.9 L567.1 238.6 L566.3 238.4 L565.5 238.6Z M573.0 203.0 L573.8 202.5 L574.6 202.8 L575.4 202.9 L576.2 202.9 L577.0 202.4 L577.8 203.0 L578.6 203.0 L578.6 203.1 L578.6 204.9 L578.6 205.4 L577.8 205.6 L577.0 205.4 L576.2 205.6 L575.4 205.6 L574.6 205.4 L573.8 205.2 L573.0 205.1Z M578.3 236.1 L579.1 235.9 L579.9 236.0 L580.7 236.0 L581.5 236.3 L582.3 235.7 L583.1 235.7 L583.9 235.7 L584.2 236.5 L584.2 238.3 L583.9 238.4 L583.1 238.6 L582.3 239.0 L581.5 239.0 L580.7 238.8 L579.9 238.7 L579.1 238.9 L578.3 238.4Z M585.8 202.7 L586.6 202.7 L587.4 202.5 L588.2 202.8 L589.0 202.7 L589.8 202.9 L590.6 202.6 L591.4 202.9 L591.4 203.1 L591.4 204.9 L591.4 205.5 L590.6 205.3 L589.8 205.5 L589.0 205.2 L588.2 205.1 L587.4 205.3 L586.6 205.5 L585.8 205.1Z M591.1 236.3 L591.9 236.0 L592.7 235.7 L593.5 235.7 L594.3 235.9 L595.1 236.4 L595.9 236.4 L596.7 235.9 L597.0 236.5 L597.0 238.3 L596.7 238.9 L595.9 239.0 L595.1 238.5 L594.3 238.9 L593.5 239.1 L592.7 238.9 L591.9 238.9 L591.1 238.6Z M598.6 202.8 L599.4 202.9 L600.2 202.3 L601.0 203.0 L601.8 202.8 L602.6 202.4 L603.4 203.0 L604.2 202.9 L604.2 203.1 L604.2 204.9 L604.2 205.6 L603.4 205.0 L602.6 205.3 L601.8 205.7 L601.0 205.1 L600.2 205.2 L599.4 205.5 L598.6 205.2Z M603.9 236.1 L604.7 235.7 L605.5 236.1 L606.3 236.3 L607.1 236.0 L607.9 236.3 L608.7 236.4 L609.5 235.9 L609.8 236.5 L609.8 238.3 L609.5 239.1 L608.7 239.1 L607.9 238.6 L607.1 238.8 L606.3 238.4 L605.5 239.0 L604.7 239.0 L603.9 239.1Z M611.4 202.3 L612.2 202.5 L613.0 202.4 L613.8 202.9 L614.6 202.9 L615.4 202.7 L616.2 202.4 L617.0 202.7 L617.0 203.1 L617.0 204.9 L617.0 205.0 L616.2 205.6 L615.4 205.0 L614.6 205.4 L613.8 205.0 L613.0 205.6 L612.2 205.3 L611.4 205.3Z M616.7 235.7 L617.5 236.4 L618.3 236.0 L619.1 236.1 L619.9 236.3 L620.7 235.7 L621.5 236.4 L622.3 236.3 L622.6 236.5 L622.6 238.3 L622.3 238.5 L621.5 238.8 L620.7 238.7 L619.9 238.5 L619.1 238.9 L618.3 239.1 L617.5 238.6 L616.7 238.8Z M624.2 202.7 L625.0 202.5 L625.8 202.7 L626.6 202.5 L627.4 202.7 L628.2 202.5 L629.0 202.9 L629.8 202.5 L629.8 203.1 L629.8 204.9 L629.8 205.3 L629.0 205.5 L628.2 205.5 L627.4 205.3 L626.6 205.0 L625.8 205.0 L625.0 205.5 L624.2 205.4Z M629.5 236.3 L630.3 236.0 L631.1 236.3 L631.9 236.3 L632.7 235.8 L633.5 235.9 L634.3 236.4 L635.1 235.7 L635.4 236.5 L635.4 238.3 L635.1 239.0 L634.3 238.4 L633.5 238.9 L632.7 239.0 L631.9 238.7 L631.1 239.1 L630.3 238.4 L629.5 239.1Z M637.0 203.0 L637.8 202.9 L638.6 202.9 L639.4 202.3 L640.2 202.3 L641.0 202.9 L641.8 202.4 L642.6 202.3 L642.6 203.1 L642.6 204.9 L642.6 205.5 L641.8 205.0 L641.0 205.0 L640.2 205.2 L639.4 205.5 L638.6 205.5 L637.8 205.7 L637.0 205.0Z M642.3 236.3 L643.1 236.3 L643.9 236.4 L644.7 235.7 L645.5 236.4 L646.3 236.0 L647.1 236.0 L647.9 236.0 L648.2 236.5 L648.2 238.3 L647.9 239.0 L647.1 238.8 L646.3 239.0 L645.5 239.0 L644.7 239.1 L643.9 239.0 L643.1 238.8 L642.3 239.0Z M649.8 203.0 L650.6 202.6 L651.4 202.7 L652.2 202.5 L653.0 202.4 L653.8 202.7 L654.6 202.5 L655.4 202.7 L655.4 203.1 L655.4 204.9 L655.4 205.0 L654.6 205.1 L653.8 205.0 L653.0 205.6 L652.2 205.0 L651.4 205.0 L650.6 205.2 L649.8 205.0Z M655.1 235.7 L655.9 236.2 L656.7 235.9 L657.5 235.8 L658.3 236.2 L659.1 235.8 L659.9 236.0 L660.7 235.8 L661.0 236.5 L661.0 238.3 L660.7 238.4 L659.9 239.1 L659.1 238.5 L658.3 238.6 L657.5 238.4 L656.7 239.0 L655.9 238.4 L655.1 238.8Z M662.6 203.0 L663.4 202.5 L664.2 202.6 L665.0 202.7 L665.8 202.5 L666.6 202.5 L667.4 202.3 L668.2 202.5 L668.2 203.1 L668.2 204.9 L668.2 205.0 L667.4 205.6 L666.6 205.6 L665.8 205.7 L665.0 205.4 L664.2 205.3 L663.4 205.4 L662.6 205.0Z M667.9 235.9 L668.7 236.1 L669.5 236.3 L670.3 236.1 L671.1 236.2 L671.9 236.2 L672.7 236.4 L673.5 235.7 L673.8 236.5 L673.8 238.3 L673.5 238.9 L672.7 238.7 L671.9 238.6 L671.1 238.6 L670.3 238.9 L669.5 239.1 L668.7 239.1 L667.9 239.0Z M675.4 202.3 L676.2 202.4 L677.0 202.4 L677.8 202.9 L678.6 203.0 L679.4 202.3 L680.2 202.8 L681.0 202.4 L681.0 203.1 L681.0 204.9 L681.0 205.7 L680.2 205.6 L679.4 205.7 L678.6 205.1 L677.8 205.3 L677.0 205.2 L676.2 205.7 L675.4 205.6Z M680.7 235.8 L681.5 236.4 L682.3 236.2 L683.1 236.2 L683.9 235.7 L684.7 236.0 L685.5 236.0 L686.3 236.1 L686.6 236.5 L686.6 238.3 L686.3 239.1 L685.5 239.1 L684.7 238.9 L683.9 238.5 L683.1 238.8 L682.3 238.9 L681.5 239.0 L680.7 238.8Z M688.2 202.5 L689.0 203.0 L689.8 202.8 L690.6 203.0 L691.4 202.5 L692.2 202.9 L693.0 202.5 L693.8 202.5 L693.8 203.1 L693.8 204.9 L693.8 205.6 L693.0 205.5 L692.2 205.3 L691.4 205.7 L690.6 205.2 L689.8 205.7 L689.0 205.1 L688.2 205.7Z M693.5 236.3 L694.3 236.4 L695.1 236.3 L695.9 235.7 L696.7 236.0 L697.5 236.0 L698.3 236.2 L699.1 236.4 L699.4 236.5 L699.4 238.3 L699.1 238.4 L698.3 238.4 L697.5 238.9 L696.7 238.9 L695.9 238.9 L695.1 238.6 L694.3 238.9 L693.5 238.6Z M701.0 202.8 L701.8 203.0 L702.6 202.3 L703.4 202.8 L704.2 202.9 L705.0 202.8 L705.8 202.5 L706.6 202.5 L706.6 203.1 L706.6 204.9 L706.6 205.0 L705.8 205.3 L705.0 205.3 L704.2 205.0 L703.4 205.6 L702.6 205.5 L701.8 205.3 L701.0 205.1Z M706.3 235.7 L707.1 235.8 L707.9 235.8 L708.7 235.8 L709.5 235.9 L710.3 236.4 L711.1 235.7 L711.9 235.9 L712.2 236.5 L712.2 238.3 L711.9 238.8 L711.1 238.5 L710.3 238.5 L709.5 238.6 L708.7 239.0 L707.9 238.5 L707.1 238.4 L706.3 238.6Z M713.8 202.5 L714.6 202.9 L715.4 202.3 L716.2 202.5 L717.0 202.9 L717.8 203.0 L718.6 202.9 L719.4 202.8 L719.4 203.1 L719.4 204.9 L719.4 205.5 L718.6 205.7 L717.8 205.6 L717.0 205.0 L716.2 205.4 L715.4 205.3 L714.6 205.0 L713.8 205.1Z M719.1 236.3 L719.9 236.2 L720.7 236.0 L721.5 236.3 L722.3 236.2 L723.1 235.8 L723.9 236.3 L724.7 236.1 L725.0 236.5 L725.0 238.3 L724.7 238.6 L723.9 238.5 L723.1 238.5 L722.3 238.7 L721.5 239.0 L720.7 238.4 L719.9 238.6 L719.1 239.0Z M726.6 202.5 L727.4 202.4 L728.2 202.5 L729.0 202.9 L729.8 202.7 L730.6 202.7 L731.4 203.0 L732.2 202.7 L732.2 203.1 L732.2 204.9 L732.2 205.1 L731.4 205.0 L730.6 205.5 L729.8 205.0 L729.0 205.0 L728.2 205.6 L727.4 205.0 L726.6 205.3Z M731.9 236.3 L732.7 236.4 L733.5 236.2 L734.3 235.7 L735.1 236.4 L735.9 235.9 L736.7 235.8 L736.8 236.5 L736.8 238.3 L736.7 239.1 L735.9 238.8 L735.1 238.5 L734.3 238.8 L733.5 238.7 L732.7 238.4 L731.9 238.7Z" fill="#f01818"/>
<path d="" fill="none" stroke="#0c9420" stroke-width="1.0" stroke-linecap="round"/>
<path d="M59.3 255.4 L60.1 255.4 L60.9 255.9 L61.7 255.4 L62.5 256.0 L63.3 255.4 L64.1 255.5 L64.9 255.7 L65.7 255.9 L66.5 255.8 L67.3 255.4 L68.1 255.9 L68.9 255.6 L69.7 256.0 L70.5 255.5 L71.3 255.9 L72.1 255.6 L72.9 255.9 L73.7 255.4 L74.5 255.4 L75.3 255.4 L76.1 255.9 L76.9 255.4 L77.7 255.9 L78.5 255.7 L79.3 255.9 L80.1 255.6 L80.9 255.8 L81.7 256.0 L82.5 255.9 L83.3 255.7 L84.1 255.7 L84.9 255.6 L85.7 255.5 L86.5 255.4 L87.3 255.9 L88.1 255.8 L88.9 255.8 L89.7 256.0 L90.5 255.9 L91.3 256.0 L92.1 255.9 L92.9 255.7 L93.7 256.0 L94.5 256.0 L95.3 255.9 L96.1 255.7 L96.9 255.4 L97.7 255.9 L98.5 255.6 L99.3 255.8 L100.1 255.6 L100.9 255.4 L101.7 255.4 L102.5 256.0 L103.3 256.0 L104.1 255.8 L104.9 255.4 L105.7 255.8 L106.5 255.5 L107.3 255.6 L108.1 256.0 L108.9 255.6 L109.7 255.5 L110.5 255.4 L111.3 256.0 L112.1 255.7 L112.9 255.6 L113.7 255.9 L114.5 255.7 L115.3 256.0 L116.1 255.6 L116.9 255.6 L117.7 256.0 L118.5 255.6 L119.3 255.6 L120.1 255.4 L120.9 255.9 L121.7 255.4 L122.5 255.8 L123.3 255.4 L124.1 255.5 L124.9 255.6 L125.7 256.0 L126.5 255.9 L127.3 256.0 L128.1 255.8 L128.9 256.0 L129.7 255.4 L130.5 255.8 L131.3 255.7 L132.1 255.7 L132.9 255.6 L133.7 255.8 L134.5 255.5 L135.3 255.6 L136.1 255.6 L136.9 255.9 L137.7 255.8 L138.5 255.5 L139.3 255.5 L140.1 255.6 L140.9 256.0 L141.7 255.5 L142.5 256.0 L143.3 255.9 L144.1 256.0 L144.9 255.9 L145.7 255.4 L146.5 256.0 L147.3 255.4 L148.1 255.8 L148.9 255.8 L149.7 255.7 L150.5 256.0 L151.3 255.9 L152.1 255.6 L152.9 255.9 L153.7 255.5 L154.5 255.7 L155.3 255.4 L156.1 256.0 L156.9 255.6 L157.7 255.5 L158.5 255.5 L159.3 256.0 L160.1 255.9 L160.9 255.5 L161.7 255.9 L162.5 255.6 L163.3 256.0 L164.1 255.6 L164.9 255.6 L165.7 255.9 L166.5 255.7 L167.3 256.0 L168.1 255.9 L168.9 255.6 L169.7 255.6 L170.5 255.9 L171.3 255.6 L172.1 255.9 L172.9 255.5 L173.7 255.5 L174.5 255.5 L175.3 255.8 L176.1 256.0 L176.9 256.0 L177.7 255.7 L178.5 255.4 L179.3 255.7 L180.1 256.0 L180.9 255.7 L181.7 255.5 L182.5 255.5 L183.3 256.0 L184.1 255.7 L184.9 255.6 L185.7 255.8 L186.5 255.6 L187.3 255.8 L188.1 255.4 L188.9 255.6 L189.7 255.7 L190.5 255.9 L191.3 255.4 L192.1 256.0 L192.9 255.6 L193.7 256.0 L194.5 255.5 L195.3 256.0 L196.1 256.0 L196.9 256.0 L197.7 255.5 L198.5 256.0 L199.3 255.9 L200.1 255.5 L200.9 255.9 L201.7 255.8 L202.5 256.0 L203.3 255.4 L204.1 255.9 L204.9 255.4 L205.7 255.7 L206.5 255.6 L207.3 255.7 L208.1 255.5 L208.9 255.9 L209.7 256.0 L210.5 255.8 L211.3 255.9 L212.1 255.4 L212.9 255.5 L213.7 255.9 L214.5 255.8 L215.3 255.8 L216.1 255.4 L216.9 256.0 L217.7 255.6 L218.5 255.4 L219.3 255.5 L220.1 255.9 L220.9 255.8 L221.7 255.8 L222.5 255.9 L223.3 255.8 L224.1 255.4 L224.9 255.9 L225.7 255.5 L226.5 255.5 L227.3 255.5 L228.1 255.6 L228.9 255.5 L229.7 255.7 L230.5 255.5 L231.3 255.5 L232.1 255.4 L232.9 255.4 L233.7 255.6 L234.5 256.0 L235.3 255.7 L236.1 255.8 L236.9 255.5 L237.7 255.9 L238.5 255.9 L239.3 255.8 L240.1 255.5 L240.9 256.0 L241.7 255.5 L242.5 255.7 L243.3 255.5 L244.1 255.8 L244.9 255.4 L245.7 255.4 L246.5 255.8 L247.3 255.6 L248.1 255.6 L248.9 255.7 L249.7 255.8 L250.5 255.6 L251.3 255.8 L252.1 255.4 L252.9 256.0 L253.7 256.0 L254.5 255.7 L255.3 255.7 L256.1 255.7 L256.9 255.5 L257.7 255.9 L258.5 255.5 L259.3 255.4 L260.1 255.7 L260.9 255.6 L261.7 255.9 L262.5 255.8 L263.3 255.9 L264.1 255.7 L264.9 255.9 L265.7 255.4 L266.5 255.5 L267.3 255.4 L268.1 255.5 L268.9 255.8 L269.7 255.9 L270.5 255.7 L271.3 255.4 L272.1 255.7 L272.9 255.7 L273.7 255.6 L274.5 255.8 L275.3 255.9 L276.1 255.8 L276.9 255.7 L277.7 256.0 L278.5 255.5 L279.3 255.9 L280.1 255.7 L280.9 255.6 L281.7 255.9 L282.5 255.5 L283.3 255.6 L284.1 255.9 L284.9 255.4 L285.7 255.4 L286.5 256.0 L287.3 255.5 L288.1 256.0 L288.9 255.6 L289.7 255.8 L290.5 255.9 L291.3 255.9 L292.1 255.6 L292.9 255.9 L293.7 256.0 L294.5 255.8 L295.3 255.9 L296.1 255.7 L296.9 255.7 L297.7 255.7 L298.5 255.6 L299.3 255.9 L300.1 255.6 L300.9 255.8 L301.7 255.8 L302.5 255.6 L303.3 255.9 L304.1 255.6 L304.9 255.5 L305.7 255.8 L306.5 255.4 L307.3 255.7 L308.1 255.7 L308.9 255.5 L309.7 255.9 L310.5 255.5 L311.3 255.6 L312.1 255.8 L312.9 255.7 L313.7 255.9 L314.5 255.4 L315.3 256.0 L316.1 255.7 L316.9 255.8 L317.7 255.8 L318.5 255.4 L319.3 255.7 L320.1 255.8 L320.9 255.5 L321.7 255.8 L322.5 255.8 L323.3 255.7 L324.1 255.8 L324.9 255.9 L325.7 256.0 L326.5 256.0 L327.3 255.9 L328.1 256.0 L328.9 255.5 L329.7 255.4 L330.5 255.7 L331.3 256.0 L332.1 255.7 L332.9 255.5 L333.7 255.8 L334.5 255.4 L335.3 255.6 L336.1 256.0 L336.9 256.0 L337.7 255.6 L338.5 256.0 L339.3 255.9 L340.1 255.6 L340.9 255.8 L341.7 255.7 L342.5 255.9 L343.3 255.4 L344.1 255.6 L344.9 255.9 L345.7 255.8 L346.5 256.0 L347.3 255.6 L348.1 255.7 L348.9 255.6 L349.7 255.4 L350.5 255.8 L351.3 255.4 L352.1 255.4 L352.9 256.0 L353.7 255.8 L354.5 256.0 L355.3 255.5 L356.1 256.0 L356.9 255.8 L357.7 255.7 L358.5 255.8 L359.3 255.4 L360.1 255.6 L360.9 255.8 L361.7 255.4 L362.5 255.5 L363.3 255.4 L364.1 255.8 L364.9 255.9 L365.7 255.9 L366.5 255.7 L367.3 255.4 L368.1 255.4 L368.9 255.9 L369.7 255.6 L370.5 255.6 L371.3 255.4 L372.1 255.5 L372.9 255.9 L373.7 255.4 L374.5 255.5 L375.3 255.5 L376.1 256.0 L376.9 255.5 L377.7 255.6 L378.5 255.8 L379.3 255.4 L380.1 255.8 L380.9 255.5 L381.7 255.7 L382.5 255.8 L383.3 255.7 L384.1 255.5 L384.9 255.6 L385.7 255.4 L386.5 255.5 L387.3 255.6 L388.1 255.9 L388.9 256.0 L389.7 256.0 L390.5 255.4 L391.3 255.7 L392.1 255.5 L392.9 255.8 L393.7 255.9 L394.5 255.5 L395.3 255.9 L396.1 255.8 L396.9 255.4 L397.7 255.5 L398.5 255.4 L399.3 255.4 L400.1 255.4 L400.9 255.6 L401.7 255.5 L402.5 256.0 L403.3 255.5 L404.1 255.5 L404.9 255.7 L405.7 255.4 L406.5 255.9 L407.3 255.7 L408.1 255.9 L408.9 255.7 L409.7 255.9 L410.5 255.7 L411.3 255.6 L412.1 255.4 L412.9 255.4 L413.7 256.0 L414.5 255.4 L415.3 255.7 L416.1 256.0 L416.9 256.0 L417.7 255.6 L418.5 255.4 L419.3 255.8 L420.1 255.6 L420.9 255.4 L421.7 255.8 L422.5 255.8 L423.3 255.9 L424.1 256.0 L424.9 255.7 L425.7 255.7 L426.5 255.5 L427.3 255.6 L428.1 255.4 L428.9 255.6 L429.7 256.0 L430.5 255.4 L431.3 255.7 L432.1 255.8 L432.9 255.6 L433.7 256.0 L434.5 255.9 L435.3 256.0 L436.1 255.9 L436.9 255.7 L437.7 255.4 L438.5 255.6 L439.3 255.5 L440.1 256.0 L440.9 255.9 L441.7 255.8 L442.5 255.4 L443.3 255.4 L444.1 255.6 L444.9 255.5 L445.7 255.8 L446.5 255.9 L447.3 255.9 L448.1 255.6 L448.9 255.9 L449.7 255.6 L450.5 255.8 L451.3 256.0 L452.1 255.8 L452.9 255.5 L453.7 255.5 L454.5 256.0 L455.3 255.8 L456.1 255.5 L456.9 255.6 L457.7 255.7 L458.5 255.4 L459.3 255.9 L460.1 256.0 L460.9 256.0 L461.7 255.8 L462.5 255.7 L463.3 255.9 L464.1 255.8 L464.9 255.4 L465.7 255.7 L466.5 256.0 L467.3 255.5 L468.1 255.9 L468.9 256.0 L469.7 255.8 L470.5 255.5 L471.3 255.7 L472.1 255.6 L472.9 255.6 L473.7 255.4 L474.5 255.9 L475.3 255.9 L476.1 255.6 L476.9 255.8 L477.7 255.6 L478.5 255.8 L479.3 255.7 L480.1 256.0 L480.9 255.4 L481.7 256.0 L482.5 255.7 L483.3 255.6 L484.1 255.5 L484.9 255.4 L485.7 255.7 L486.5 255.7 L487.3 255.6 L488.1 255.6 L488.9 256.0 L489.7 255.5 L490.5 255.8 L491.3 255.6 L492.1 255.8 L492.9 255.8 L493.7 255.9 L494.5 255.7 L495.3 256.0 L496.1 255.4 L496.9 255.9 L497.7 255.5 L498.5 255.8 L499.3 256.0 L500.1 255.8 L500.9 255.4 L501.7 255.4 L502.5 255.4 L503.3 255.4 L504.1 255.4 L504.9 255.9 L505.7 255.7 L506.5 255.8 L507.3 255.6 L508.1 255.9 L508.9 255.7 L509.7 255.6 L510.5 255.7 L511.3 255.5 L512.1 255.5 L512.9 255.9 L513.7 255.7 L514.5 255.8 L515.3 255.6 L516.1 255.7 L516.9 255.9 L517.7 255.8 L518.5 255.8 L519.3 255.5 L520.1 255.9 L520.9 255.6 L521.7 255.6 L522.5 255.9 L523.3 255.8 L524.1 255.4 L524.9 255.6 L525.7 255.5 L526.5 255.8 L527.3 255.5 L528.1 255.7 L528.9 255.9 L529.7 255.6 L530.5 255.5 L531.3 255.7 L532.1 255.8 L532.9 255.9 L533.7 255.9 L534.5 255.5 L535.3 255.5 L536.1 255.8 L536.9 255.5 L537.7 256.0 L538.5 255.7 L539.3 255.6 L540.1 256.0 L540.9 255.8 L541.7 255.8 L542.5 255.8 L543.3 255.6 L544.1 256.0 L544.9 255.6 L545.7 255.9 L546.5 255.4 L547.3 255.6 L548.1 255.8 L548.9 255.8 L549.7 255.6 L550.5 256.0 L551.3 255.8 L552.1 255.8 L552.9 256.0 L553.7 255.9 L554.5 255.9 L555.3 255.8 L556.1 255.5 L556.9 255.9 L557.7 255.7 L558.5 256.0 L559.3 255.9 L560.1 255.5 L560.9 255.7 L561.7 255.5 L562.5 255.9 L563.3 255.7 L564.1 256.0 L564.9 255.9 L565.7 256.0 L566.5 255.8 L567.3 255.7 L568.1 255.6 L568.9 255.4 L569.7 255.7 L570.5 255.8 L571.3 255.9 L572.1 255.8 L572.9 255.6 L573.7 255.9 L574.5 255.4 L575.3 256.0 L576.1 255.7 L576.9 255.8 L577.7 255.8 L578.5 255.4 L579.3 255.8 L580.1 255.6 L580.9 255.7 L581.7 255.9 L582.5 255.7 L583.3 255.8 L584.1 256.0 L584.9 255.4 L585.7 255.6 L586.5 255.7 L587.3 255.9 L588.1 255.6 L588.9 255.6 L589.7 255.6 L590.5 255.7 L591.3 255.7 L592.1 255.7 L592.9 256.0 L593.7 255.6 L594.5 255.6 L595.3 255.6 L596.1 255.7 L596.9 255.7 L597.7 255.8 L598.5 255.4 L599.3 255.6 L600.1 255.6 L600.9 255.4 L601.7 255.5 L602.5 255.5 L603.3 255.5 L604.1 256.0 L604.9 255.7 L605.7 255.6 L606.5 255.4 L607.3 255.4 L608.1 256.0 L608.9 256.0 L609.7 255.6 L610.5 255.9 L611.3 255.9 L612.1 255.4 L612.9 255.4 L613.7 255.5 L614.5 255.4 L615.3 255.5 L616.1 256.0 L616.9 255.7 L617.7 255.4 L618.5 255.6 L619.3 255.5 L620.1 255.9 L620.9 255.9 L621.7 255.5 L622.5 255.6 L623.3 255.9 L624.1 255.4 L624.9 255.7 L625.7 256.0 L626.5 255.5 L627.3 255.8 L628.1 255.8 L628.9 255.6 L629.7 255.7 L630.5 255.4 L631.3 255.7 L632.1 255.9 L632.9 255.8 L633.7 256.0 L634.5 255.6 L635.3 255.8 L636.1 255.9 L636.9 256.0 L637.7 255.9 L638.5 255.7 L639.3 255.6 L640.1 255.5 L640.9 255.4 L641.7 255.6 L642.5 255.7 L643.3 255.4 L644.1 256.0 L644.9 255.7 L645.7 255.9 L646.5 255.8 L647.3 255.9 L648.1 255.9 L648.9 255.7 L649.7 255.7 L650.5 256.0 L651.3 255.9 L652.1 255.5 L652.9 255.7 L653.7 255.5 L654.5 255.5 L655.3 255.6 L656.1 255.8 L656.9 256.0 L657.7 255.6 L658.5 255.7 L659.3 256.0 L660.1 255.4 L660.9 255.9 L661.7 255.9 L662.5 255.7 L663.3 255.8 L664.1 255.8 L664.9 255.5 L665.7 255.9 L666.5 255.8 L667.3 255.6 L668.1 255.4 L668.9 256.0 L669.7 255.8 L670.5 255.8 L671.3 256.0 L672.1 255.7 L672.9 255.7 L673.7 255.5 L674.5 255.9 L675.3 255.4 L676.1 255.6 L676.9 255.7 L677.7 255.9 L678.5 255.4 L679.3 255.8 L680.1 255.4 L680.9 255.6 L681.7 255.5 L682.5 256.0 L683.3 255.6 L684.1 255.9 L684.9 255.6 L685.7 256.0 L686.5 255.8 L687.3 255.8 L688.1 255.6 L688.9 255.5 L689.7 255.7 L690.5 256.0 L691.3 256.0 L692.1 256.0 L692.9 255.8 L693.7 255.8 L694.5 255.8 L695.3 255.7 L696.1 255.4 L696.9 255.7 L697.7 255.4 L698.5 255.6 L699.3 255.8 L700.1 255.9 L700.9 256.0 L701.7 255.4 L702.5 255.7 L703.3 255.9 L704.1 255.7 L704.9 255.4 L705.7 255.9 L706.5 255.8 L707.3 255.7 L708.1 255.8 L708.9 255.6 L709.7 255.4 L710.5 255.8 L711.3 256.0 L712.1 256.0 L712.9 256.0 L713.7 255.9 L714.5 256.0 L715.3 255.7 L716.1 255.5 L716.9 255.9 L717.7 255.5 L718.5 255.5 L719.3 255.4 L720.1 255.6 L720.9 256.0 L721.7 255.6 L722.5 255.5 L723.3 255.7 L724.1 255.7 L724.9 255.6 L725.7 255.9 L726.5 256.0 L727.3 255.7 L728.1 256.0 L728.9 255.7 L729.7 255.8 L730.5 255.4 L731.3 255.4 L732.1 255.4 L732.9 255.9 L733.7 255.6 L734.5 255.4 L735.3 255.5 L736.1 256.0 L736.8 256.1 L736.8 257.6 L736.1 258.2 L735.3 257.9 L734.5 258.0 L733.7 257.7 L732.9 258.1 L732.1 258.2 L731.3 258.2 L730.5 257.7 L729.7 257.8 L728.9 258.1 L728.1 257.9 L727.3 257.7 L726.5 258.1 L725.7 258.0 L724.9 257.8 L724.1 257.7 L723.3 257.7 L722.5 257.7 L721.7 258.0 L720.9 257.6 L720.1 258.2 L719.3 257.8 L718.5 257.6 L717.7 257.6 L716.9 257.7 L716.1 257.8 L715.3 257.6 L714.5 257.7 L713.7 257.6 L712.9 257.7 L712.1 257.9 L711.3 257.8 L710.5 258.1 L709.7 257.6 L708.9 257.6 L708.1 258.0 L707.3 258.2 L706.5 257.6 L705.7 257.9 L704.9 258.2 L704.1 257.8 L703.3 257.7 L702.5 258.1 L701.7 257.7 L700.9 257.9 L700.1 257.6 L699.3 258.1 L698.5 258.1 L697.7 257.8 L696.9 257.7 L696.1 257.8 L695.3 257.8 L694.5 257.6 L693.7 257.9 L692.9 257.7 L692.1 258.1 L691.3 258.2 L690.5 258.1 L689.7 258.1 L688.9 257.8 L688.1 257.8 L687.3 257.6 L686.5 258.0 L685.7 257.9 L684.9 258.0 L684.1 258.0 L683.3 258.1 L682.5 257.8 L681.7 257.9 L680.9 258.0 L680.1 257.6 L679.3 258.2 L678.5 257.6 L677.7 257.9 L676.9 258.0 L676.1 257.9 L675.3 257.8 L674.5 257.8 L673.7 257.9 L672.9 258.1 L672.1 257.9 L671.3 258.2 L670.5 257.8 L669.7 258.2 L668.9 258.1 L668.1 257.7 L667.3 258.1 L666.5 257.6 L665.7 257.6 L664.9 257.6 L664.1 258.1 L663.3 257.9 L662.5 257.7 L661.7 257.6 L660.9 257.6 L660.1 257.6 L659.3 258.1 L658.5 258.1 L657.7 257.7 L656.9 258.0 L656.1 257.9 L655.3 258.0 L654.5 257.7 L653.7 257.8 L652.9 257.7 L652.1 257.9 L651.3 257.6 L650.5 258.2 L649.7 258.1 L648.9 257.9 L648.1 257.9 L647.3 258.0 L646.5 257.7 L645.7 258.2 L644.9 257.7 L644.1 257.8 L643.3 257.7 L642.5 258.0 L641.7 258.1 L640.9 258.1 L640.1 257.8 L639.3 257.6 L638.5 258.0 L637.7 258.1 L636.9 258.1 L636.1 257.9 L635.3 258.0 L634.5 257.9 L633.7 257.7 L632.9 258.1 L632.1 258.1 L631.3 258.1 L630.5 257.9 L629.7 257.7 L628.9 257.8 L628.1 258.1 L627.3 257.7 L626.5 258.2 L625.7 258.1 L624.9 257.9 L624.1 257.8 L623.3 257.7 L622.5 257.8 L621.7 257.7 L620.9 258.1 L620.1 258.2 L619.3 257.9 L618.5 257.9 L617.7 257.7 L616.9 258.0 L616.1 258.2 L615.3 257.7 L614.5 258.1 L613.7 257.7 L612.9 257.9 L612.1 258.2 L611.3 258.2 L610.5 257.8 L609.7 257.6 L608.9 257.6 L608.1 257.8 L607.3 257.8 L606.5 257.7 L605.7 257.9 L604.9 258.1 L604.1 258.2 L603.3 257.9 L602.5 257.7 L601.7 257.7 L600.9 258.2 L600.1 257.6 L599.3 257.6 L598.5 258.1 L597.7 257.9 L596.9 258.1 L596.1 258.1 L595.3 257.7 L594.5 258.1 L593.7 257.9 L592.9 257.8 L592.1 258.0 L591.3 257.6 L590.5 257.8 L589.7 257.7 L588.9 257.6 L588.1 257.7 L587.3 258.0 L586.5 257.7 L585.7 257.9 L584.9 258.0 L584.1 257.7 L583.3 258.1 L582.5 258.1 L581.7 258.1 L580.9 257.8 L580.1 258.0 L579.3 257.7 L578.5 257.8 L577.7 257.8 L576.9 258.1 L576.1 257.8 L575.3 258.0 L574.5 257.8 L573.7 257.6 L572.9 257.9 L572.1 257.8 L571.3 258.2 L570.5 258.2 L569.7 257.9 L568.9 257.7 L568.1 257.9 L567.3 257.8 L566.5 257.9 L565.7 257.6 L564.9 257.6 L564.1 257.9 L563.3 258.2 L562.5 258.1 L561.7 257.6 L560.9 257.8 L560.1 258.1 L559.3 258.0 L558.5 257.8 L557.7 258.2 L556.9 258.1 L556.1 258.1 L555.3 257.6 L554.5 258.0 L553.7 258.1 L552.9 258.2 L552.1 258.2 L551.3 257.8 L550.5 257.7 L549.7 257.9 L548.9 258.0 L548.1 257.6 L547.3 258.0 L546.5 257.7 L545.7 258.1 L544.9 257.8 L544.1 258.0 L543.3 257.7 L542.5 258.0 L541.7 258.1 L540.9 257.6 L540.1 257.8 L539.3 257.7 L538.5 257.8 L537.7 258.2 L536.9 257.8 L536.1 257.7 L535.3 258.2 L534.5 257.8 L533.7 258.2 L532.9 257.7 L532.1 258.2 L531.3 257.8 L530.5 258.2 L529.7 258.2 L528.9 257.9 L528.1 257.8 L527.3 258.1 L526.5 257.6 L525.7 257.7 L524.9 258.2 L524.1 257.9 L523.3 257.6 L522.5 257.6 L521.7 258.0 L520.9 258.0 L520.1 258.1 L519.3 257.7 L518.5 258.1 L517.7 257.8 L516.9 257.9 L516.1 258.1 L515.3 258.1 L514.5 257.8 L513.7 257.8 L512.9 258.2 L512.1 257.9 L511.3 258.0 L510.5 257.7 L509.7 257.7 L508.9 257.8 L508.1 257.9 L507.3 257.7 L506.5 257.9 L505.7 257.8 L504.9 257.9 L504.1 257.9 L503.3 258.0 L502.5 258.0 L501.7 258.1 L500.9 257.8 L500.1 258.2 L499.3 257.6 L498.5 258.0 L497.7 257.6 L496.9 258.2 L496.1 258.0 L495.3 258.1 L494.5 257.6 L493.7 258.2 L492.9 258.0 L492.1 258.0 L491.3 258.1 L490.5 257.6 L489.7 257.6 L488.9 258.1 L488.1 258.2 L487.3 258.0 L486.5 257.6 L485.7 257.6 L484.9 258.1 L484.1 257.8 L483.3 257.9 L482.5 257.7 L481.7 257.9 L480.9 258.2 L480.1 257.9 L479.3 257.7 L478.5 258.0 L477.7 257.7 L476.9 257.7 L476.1 258.2 L475.3 257.6 L474.5 257.8 L473.7 257.6 L472.9 257.6 L472.1 257.9 L471.3 257.7 L470.5 258.1 L469.7 257.6 L468.9 257.9 L468.1 258.0 L467.3 258.0 L466.5 257.6 L465.7 257.7 L464.9 258.0 L464.1 257.8 L463.3 257.7 L462.5 258.2 L461.7 257.8 L460.9 258.0 L460.1 257.8 L459.3 257.6 L458.5 258.0 L457.7 257.9 L456.9 258.1 L456.1 257.7 L455.3 257.8 L454.5 257.9 L453.7 257.7 L452.9 257.7 L452.1 257.7 L451.3 257.6 L450.5 257.9 L449.7 257.9 L448.9 257.9 L448.1 258.1 L447.3 257.7 L446.5 257.6 L445.7 258.2 L444.9 257.9 L444.1 257.7 L443.3 258.0 L442.5 258.2 L441.7 258.0 L440.9 257.7 L440.1 258.1 L439.3 258.2 L438.5 257.6 L437.7 257.8 L436.9 257.8 L436.1 258.2 L435.3 258.2 L434.5 258.1 L433.7 257.7 L432.9 258.1 L432.1 258.2 L431.3 257.6 L430.5 257.8 L429.7 257.8 L428.9 257.6 L428.1 258.0 L427.3 258.2 L426.5 258.0 L425.7 257.6 L424.9 257.7 L424.1 257.6 L423.3 258.2 L422.5 258.2 L421.7 258.0 L420.9 258.0 L420.1 257.9 L419.3 258.2 L418.5 258.0 L417.7 257.9 L416.9 257.7 L416.1 257.7 L415.3 257.8 L414.5 257.8 L413.7 258.0 L412.9 258.2 L412.1 257.8 L411.3 257.7 L410.5 258.1 L409.7 257.8 L408.9 257.9 L408.1 257.6 L407.3 257.8 L406.5 258.0 L405.7 258.2 L404.9 258.1 L404.1 257.7 L403.3 258.0 L402.5 258.2 L401.7 257.9 L400.9 257.9 L400.1 258.1 L399.3 258.0 L398.5 257.7 L397.7 257.7 L396.9 257.9 L396.1 257.7 L395.3 257.9 L394.5 257.6 L393.7 257.6 L392.9 258.2 L392.1 258.1 L391.3 257.9 L390.5 257.6 L389.7 258.1 L388.9 257.9 L388.1 258.1 L387.3 257.8 L386.5 257.6 L385.7 257.9 L384.9 257.6 L384.1 257.7 L383.3 257.6 L382.5 258.2 L381.7 258.2 L380.9 258.1 L380.1 258.0 L379.3 258.2 L378.5 258.2 L377.7 257.7 L376.9 257.7 L376.1 257.9 L375.3 258.0 L374.5 257.7 L373.7 257.9 L372.9 257.6 L372.1 257.6 L371.3 257.6 L370.5 257.8 L369.7 258.2 L368.9 258.1 L368.1 258.1 L367.3 257.6 L366.5 257.7 L365.7 258.2 L364.9 258.0 L364.1 258.1 L363.3 258.0 L362.5 258.1 L361.7 258.1 L360.9 257.7 L360.1 257.8 L359.3 258.2 L358.5 258.2 L357.7 258.1 L356.9 258.0 L356.1 258.1 L355.3 257.9 L354.5 258.1 L353.7 258.0 L352.9 257.7 L352.1 257.9 L351.3 258.2 L350.5 257.8 L349.7 258.0 L348.9 257.9 L348.1 258.1 L347.3 257.6 L346.5 257.9 L345.7 258.1 L344.9 257.7 L344.1 257.7 L343.3 258.2 L342.5 257.7 L341.7 257.8 L340.9 258.2 L340.1 258.2 L339.3 258.0 L338.5 257.7 L337.7 258.0 L336.9 257.6 L336.1 257.6 L335.3 258.2 L334.5 258.1 L333.7 257.6 L332.9 258.2 L332.1 257.7 L331.3 258.2 L330.5 258.2 L329.7 258.2 L328.9 258.1 L328.1 257.7 L327.3 257.7 L326.5 258.1 L325.7 257.7 L324.9 258.0 L324.1 258.1 L323.3 257.7 L322.5 258.2 L321.7 257.8 L320.9 257.7 L320.1 258.0 L319.3 257.8 L318.5 258.0 L317.7 257.9 L316.9 258.2 L316.1 257.9 L315.3 257.8 L314.5 258.1 L313.7 257.6 L312.9 257.8 L312.1 258.2 L311.3 258.0 L310.5 258.1 L309.7 257.8 L308.9 258.2 L308.1 258.0 L307.3 257.8 L306.5 257.8 L305.7 258.0 L304.9 258.1 L304.1 257.6 L303.3 258.2 L302.5 257.8 L301.7 257.8 L300.9 257.8 L300.1 258.2 L299.3 257.6 L298.5 257.7 L297.7 257.7 L296.9 258.2 L296.1 258.2 L295.3 257.9 L294.5 257.9 L293.7 257.7 L292.9 257.7 L292.1 257.8 L291.3 257.8 L290.5 257.7 L289.7 258.1 L288.9 258.2 L288.1 257.9 L287.3 258.0 L286.5 257.6 L285.7 257.9 L284.9 257.6 L284.1 258.1 L283.3 258.0 L282.5 258.1 L281.7 258.0 L280.9 258.2 L280.1 257.7 L279.3 257.7 L278.5 258.1 L277.7 257.8 L276.9 257.6 L276.1 257.9 L275.3 257.7 L274.5 258.0 L273.7 258.1 L272.9 257.7 L272.1 258.2 L271.3 258.2 L270.5 258.2 L269.7 257.6 L268.9 258.2 L268.1 258.2 L267.3 257.9 L266.5 257.7 L265.7 257.9 L264.9 258.2 L264.1 258.0 L263.3 257.9 L262.5 258.1 L261.7 257.8 L260.9 258.2 L260.1 257.8 L259.3 258.2 L258.5 257.7 L257.7 258.1 L256.9 257.8 L256.1 258.1 L255.3 257.6 L254.5 258.1 L253.7 258.0 L252.9 258.2 L252.1 258.0 L251.3 257.8 L250.5 257.7 L249.7 258.2 L248.9 257.9 L248.1 258.1 L247.3 257.6 L246.5 258.2 L245.7 258.1 L244.9 257.9 L244.1 258.0 L243.3 258.2 L242.5 257.8 L241.7 257.7 L240.9 257.6 L240.1 257.7 L239.3 257.6 L238.5 257.6 L237.7 257.8 L236.9 258.2 L236.1 258.1 L235.3 257.9 L234.5 258.2 L233.7 258.0 L232.9 258.1 L232.1 257.6 L231.3 258.1 L230.5 257.8 L229.7 257.8 L228.9 257.6 L228.1 257.8 L227.3 257.7 L226.5 258.1 L225.7 258.2 L224.9 258.2 L224.1 258.1 L223.3 258.0 L222.5 258.2 L221.7 257.6 L220.9 257.8 L220.1 257.8 L219.3 258.1 L218.5 257.8 L217.7 258.2 L216.9 258.1 L216.1 258.0 L215.3 258.1 L214.5 257.7 L213.7 258.1 L212.9 257.8 L212.1 257.7 L211.3 257.9 L210.5 257.7 L209.7 258.1 L208.9 258.2 L208.1 257.6 L207.3 258.1 L206.5 257.8 L205.7 258.2 L204.9 258.2 L204.1 258.1 L203.3 257.6 L202.5 257.7 L201.7 257.8 L200.9 258.1 L200.1 257.7 L199.3 257.9 L198.5 257.6 L197.7 257.6 L196.9 257.8 L196.1 258.2 L195.3 257.8 L194.5 257.9 L193.7 258.1 L192.9 257.8 L192.1 257.9 L191.3 258.2 L190.5 257.6 L189.7 258.0 L188.9 257.6 L188.1 258.2 L187.3 257.9 L186.5 258.1 L185.7 257.9 L184.9 257.7 L184.1 257.7 L183.3 257.8 L182.5 257.6 L181.7 257.9 L180.9 257.8 L180.1 257.9 L179.3 257.7 L178.5 258.2 L177.7 257.7 L176.9 257.6 L176.1 258.0 L175.3 258.1 L174.5 257.8 L173.7 258.2 L172.9 258.1 L172.1 257.7 L171.3 257.7 L170.5 257.8 L169.7 258.2 L168.9 258.0 L168.1 257.8 L167.3 258.1 L166.5 258.1 L165.7 257.8 L164.9 257.7 L164.1 257.6 L163.3 257.7 L162.5 257.9 L161.7 257.6 L160.9 258.1 L160.1 258.0 L159.3 258.0 L158.5 258.1 L157.7 257.7 L156.9 257.8 L156.1 257.7 L155.3 257.9 L154.5 257.7 L153.7 257.8 L152.9 258.1 L152.1 258.0 L151.3 257.6 L150.5 257.6 L149.7 257.7 L148.9 257.8 L148.1 257.9 L147.3 257.7 L146.5 258.2 L145.7 257.6 L144.9 258.0 L144.1 257.7 L143.3 258.0 L142.5 257.6 L141.7 257.7 L140.9 257.9 L140.1 257.7 L139.3 258.2 L138.5 258.0 L137.7 257.7 L136.9 258.1 L136.1 258.2 L135.3 258.0 L134.5 258.1 L133.7 258.2 L132.9 257.7 L132.1 257.6 L131.3 257.7 L130.5 258.0 L129.7 258.0 L128.9 258.0 L128.1 257.8 L127.3 257.6 L126.5 257.7 L125.7 257.7 L124.9 258.1 L124.1 257.8 L123.3 257.7 L122.5 258.2 L121.7 257.7 L120.9 257.9 L120.1 258.1 L119.3 257.7 L118.5 258.0 L117.7 257.9 L116.9 258.1 L116.1 257.9 L115.3 258.1 L114.5 258.0 L113.7 257.8 L112.9 257.7 L112.1 257.7 L111.3 258.2 L110.5 257.7 L109.7 258.2 L108.9 258.0 L108.1 257.7 L107.3 257.9 L106.5 258.1 L105.7 257.9 L104.9 258.2 L104.1 257.8 L103.3 257.6 L102.5 258.2 L101.7 257.8 L100.9 257.7 L100.1 258.2 L99.3 258.2 L98.5 257.9 L97.7 257.7 L96.9 257.6 L96.1 258.0 L95.3 257.6 L94.5 258.2 L93.7 257.7 L92.9 258.0 L92.1 257.9 L91.3 258.0 L90.5 258.1 L89.7 257.8 L88.9 258.0 L88.1 257.8 L87.3 258.2 L86.5 257.9 L85.7 257.7 L84.9 257.7 L84.1 258.2 L83.3 258.2 L82.5 257.9 L81.7 258.2 L80.9 258.0 L80.1 258.2 L79.3 258.1 L78.5 257.6 L77.7 257.6 L76.9 257.6 L76.1 258.0 L75.3 257.7 L74.5 257.8 L73.7 258.1 L72.9 258.1 L72.1 258.0 L71.3 257.9 L70.5 257.9 L69.7 257.9 L68.9 257.9 L68.1 257.6 L67.3 257.9 L66.5 257.6 L65.7 258.0 L64.9 257.8 L64.1 257.6 L63.3 257.9 L62.5 257.7 L61.7 257.7 L60.9 257.7 L60.1 257.9 L59.3 257.6Z" fill="#0c9420"/>
<text x="22" y="129.4" font-size="9" fill="#fff" textLength="18" lengthAdjust="spacingAndGlyphs" >2.2V</text>
<text x="30.6" y="157" font-size="8.6" fill="#f0f03c" font-weight="bold" textLength="21" lengthAdjust="spacingAndGlyphs" transform="rotate(-90 30.6 157)" >CMD</text>
<text x="22" y="172" font-size="9" fill="#fff" textLength="28" lengthAdjust="spacingAndGlyphs" >-140mV</text>
<text x="16.5" y="233" font-size="10" fill="#fff" textLength="46" lengthAdjust="spacingAndGlyphs" transform="rotate(-90 16.5 233)" >Amplitude</text>
<text x="22" y="202" font-size="9" fill="#fff" textLength="18" lengthAdjust="spacingAndGlyphs" >2.3V</text>
<text x="30.6" y="232.5" font-size="9" fill="#e4132a" font-weight="bold" textLength="30" lengthAdjust="spacingAndGlyphs" transform="rotate(-90 30.6 232.5)" >Clock</text>
<text x="22" y="248.4" font-size="9" fill="#fff" textLength="28" lengthAdjust="spacingAndGlyphs" >-360mV</text>
<text x="22" y="261" font-size="9" fill="#fff" textLength="18" lengthAdjust="spacingAndGlyphs" >2.1V</text>
<text x="30.4" y="287.5" font-size="9" fill="#14a050" font-weight="bold" textLength="25" lengthAdjust="spacingAndGlyphs" transform="rotate(-90 30.4 287.5)" >Data</text>
<text x="22" y="304" font-size="9" fill="#fff" textLength="28" lengthAdjust="spacingAndGlyphs" >-120mV</text>
<text x="60" y="310.6" font-size="9" fill="#fff" textLength="36" lengthAdjust="spacingAndGlyphs" >-1.3603µS</text>
<text x="177" y="310.6" font-size="9" fill="#fff" textLength="34" lengthAdjust="spacingAndGlyphs" >25.717µS</text>
<text x="307" y="310.6" font-size="9" fill="#fff" textLength="35" lengthAdjust="spacingAndGlyphs" >52.794µS</text>
<text x="449" y="310.6" font-size="9" fill="#fff" textLength="35" lengthAdjust="spacingAndGlyphs" >79.871µS</text>
<text x="576.5" y="310.6" font-size="9" fill="#fff" textLength="35" lengthAdjust="spacingAndGlyphs" >106.95µS</text>
<text x="701.5" y="310.6" font-size="9" fill="#fff" textLength="35" lengthAdjust="spacingAndGlyphs" >134.03µS</text>
<text x="346" y="321.4" font-size="9" fill="#fff" font-weight="bold" textLength="76" lengthAdjust="spacingAndGlyphs" >Time(Seconds) --&gt;</text>
<rect x="28.7" y="312.5" width="9" height="9" fill="#fff" stroke="#444" stroke-width="0.8"/>
<path d="M30.5 316.9 L32.5 319.1 L36.1 314.7" fill="none" stroke="#222" stroke-width="1.3"/>
<text x="43" y="320.4" font-size="9" fill="#e4132a" font-weight="bold" textLength="56" lengthAdjust="spacingAndGlyphs" >Show CLOCK</text>
<rect x="111" y="312.5" width="9" height="9" fill="#fff" stroke="#444" stroke-width="0.8"/>
<path d="M112.8 316.9 L114.8 319.1 L118.4 314.7" fill="none" stroke="#222" stroke-width="1.3"/>
<text x="125" y="320.4" font-size="9" fill="#118a3c" font-weight="bold" textLength="50" lengthAdjust="spacingAndGlyphs" >Show DATA</text>
<rect x="189.5" y="312.5" width="9" height="9" fill="#fff" stroke="#444" stroke-width="0.8"/>
<path d="M191.3 316.9 L193.3 319.1 L196.9 314.7" fill="none" stroke="#222" stroke-width="1.3"/>
<text x="202.5" y="320.4" font-size="9" fill="#ffff3c" font-weight="bold" textLength="46.5" lengthAdjust="spacingAndGlyphs" >Show CMD</text>
<defs><linearGradient id="bg1" x1="0" y1="0" x2="1" y2="1"><stop offset="0" stop-color="#dde6fb"/><stop offset="1" stop-color="#9cb3ea"/></linearGradient><linearGradient id="bg2" x1="0" y1="0" x2="1" y2="1"><stop offset="0" stop-color="#a9bcee"/><stop offset="1" stop-color="#8aa2e0"/></linearGradient></defs>
<rect x="741.4" y="126.4" width="19.2" height="19" fill="url(#bg2)" stroke="#a4b8ee" stroke-width="1"/>
<rect x="741.4" y="150.6" width="19.2" height="19" fill="url(#bg1)" stroke="#a4b8ee" stroke-width="1"/>
<rect x="741.4" y="175" width="19.2" height="19" fill="url(#bg1)" stroke="#a4b8ee" stroke-width="1"/>
<rect x="741.4" y="199" width="19.2" height="19" fill="url(#bg2)" stroke="#a4b8ee" stroke-width="1"/>
<rect x="741.4" y="223" width="19.2" height="19" fill="url(#bg2)" stroke="#a4b8ee" stroke-width="1"/>
<rect x="741.4" y="247.3" width="19.2" height="19" fill="url(#bg1)" stroke="#a4b8ee" stroke-width="1"/>
<rect x="741.4" y="271.6" width="19.2" height="19" fill="url(#bg1)" stroke="#a4b8ee" stroke-width="1"/>
<rect x="742.6" y="127.60000000000001" width="16.8" height="16.6" fill="#7290c8" />
<rect x="743.8" y="130.4" width="2.4" height="13.8" fill="#15151c" />
<rect x="746.4" y="131.4" width="2.2" height="12.8" fill="#e4e6ee" />
<ellipse cx="752" cy="130.6" rx="3.2" ry="2" fill="#d8c268"/>
<ellipse cx="751.4" cy="134.20000000000002" rx="2.4" ry="2.4" fill="#ead8d0"/>
<path d="M748.4 144.20000000000002 L749 138.0 Q752 135.6 755.2 138.0 L756 144.20000000000002 Z" fill="#2468d4"/>
<rect x="751" y="137.4" width="1.6" height="3" fill="#f0f0f4" />
<rect x="756.6" y="133.4" width="2.4" height="10.8" fill="#39445c" />
<rect x="746.2" y="153.6" width="10.6" height="9.2" fill="#e6ecfc" stroke="#34489c" stroke-width="0.9"/>
<rect x="746.2" y="153.6" width="10.6" height="1.7" fill="#5878c8" />
<rect x="751.6" y="157.0" width="4" height="3.6" fill="#b8c8ec" />
<circle cx="747.5" cy="159.6" r="2.7" fill="#f2f4ec" stroke="#6a7078" stroke-width="0.8"/>
<line x1="749.5" y1="161.6" x2="752" y2="163.9" stroke="#a89424" stroke-width="1.5" />
<path d="M749.4 183.2 Q754.8 180.6 754.6 184.8 Q754.2 187.4 751.2 188.6" fill="none" stroke="#4a7ae0" stroke-width="2.1" stroke-linecap="round"/>
<path d="M746 183 L750.4 181 L750.2 185.8 Z" fill="#4a7ae0"/>
<rect x="746.3" y="204.4" width="8.2" height="8.2" fill="none" stroke="#eef2ff" stroke-width="1" stroke-dasharray="1.5 0.9"/>
<path d="M750.4 201.9 L750.4 215.1 M743.8 208.5 L757.0 208.5" stroke="#14204c" stroke-width="0.9"/>
<path d="M750.4 201.1 l-2.2 2.6 h4.4 Z M750.4 215.9 l-2.2 -2.6 h4.4 Z M743.0 208.5 l2.6 -2.2 v4.4 Z M757.8 208.5 l-2.6 -2.2 v4.4 Z" fill="#14204c"/>
<path d="M745.6 232.6 q0.9 -1.3 2 -0.2 l1.2 1.6 v2 l-0.6 2.2 h-0.4 Z" fill="#fff" stroke="#30303a" stroke-width="0.6"/>
<rect x="748.2" y="228.2" width="1.8" height="6" rx="0.9" fill="#fff" stroke="#30303a" stroke-width="0.6"/>
<rect x="750.2" y="226.8" width="1.8" height="7" rx="0.9" fill="#fff" stroke="#30303a" stroke-width="0.6"/>
<rect x="752.2" y="227.2" width="1.8" height="7" rx="0.9" fill="#fff" stroke="#30303a" stroke-width="0.6"/>
<rect x="754.2" y="228.8" width="1.8" height="6" rx="0.9" fill="#fff" stroke="#30303a" stroke-width="0.6"/>
<path d="M747.6 233 h8.6 v2.6 q0 2.6 -2.4 2.8 h-3 q-1.8 -0.2 -3.2 -2.6 Z" fill="#fff" stroke="none"/>
<path d="M747 234.4 l0.8 2 q1.2 1.9 2.8 2 h3.2 q2.3 -0.3 2.4 -2.8 v-1.4" fill="none" stroke="#30303a" stroke-width="0.6"/>
<rect x="748.4" y="238.8" width="5" height="1.1" fill="#111" />
<rect x="747" y="250.3" width="4" height="11.4" fill="#f6d2d8" />
<line x1="747" y1="250.10000000000002" x2="747" y2="262.90000000000003" stroke="#d85a6c" stroke-width="1" />
<line x1="751" y1="249.3" x2="751" y2="260.90000000000003" stroke="#d85a6c" stroke-width="1" />
<rect x="743.8" y="278.20000000000005" width="12" height="3.8" fill="#f6d2d8" />
<line x1="743.8" y1="278.20000000000005" x2="755.8" y2="278.20000000000005" stroke="#d85a6c" stroke-width="1.1" />
<line x1="743.8" y1="281.90000000000003" x2="755.8" y2="281.90000000000003" stroke="#d85a6c" stroke-width="1.1" />
<path d="M742.8 309 L748 303.6 L753.4 309 L748 314.6 Z" fill="#f2f2f2" stroke="#b8b8c8" stroke-width="0.5"/>
<path d="M746 312.4 L749.6 316.6 L751.2 314.6 Z" fill="#d0d0d8"/>
<rect x="751.6" y="308.0" width="4.8" height="4" fill="#c42222" />
<rect x="756.6" y="308.0" width="4.8" height="4" fill="#4cb040" />
<rect x="751.6" y="312.1" width="4.8" height="4" fill="#f0e040" />
<rect x="756.6" y="312.1" width="4.8" height="4" fill="#20a0a4" />
<rect x="751.6" y="316.2" width="4.8" height="4" fill="#181870" />
<rect x="756.6" y="316.2" width="4.8" height="4" fill="#e08444" />
<rect x="4.8" y="341.6" width="92.8" height="27.4" fill="none" stroke="#7d90d4" stroke-width="1"/>
<rect x="10" y="336" width="41" height="10" fill="#3d50a8" />
<text x="11.8" y="344.4" font-size="9" fill="#fff" textLength="38" lengthAdjust="spacingAndGlyphs" >Annotation</text>
<rect x="7.8" y="349" width="23" height="9.8" fill="#ffff28" />
<text x="9.4" y="357.2" font-size="9" fill="#222" textLength="19.5" lengthAdjust="spacingAndGlyphs" >CMD</text>
<rect x="33.8" y="349" width="31.4" height="9.8" fill="#e8141e" />
<text x="35.6" y="357.2" font-size="9" fill="#b00a14" textLength="28" lengthAdjust="spacingAndGlyphs" >CLOCK</text>
<rect x="67" y="349" width="26.8" height="9.8" fill="#0c7a1c" />
<text x="68.6" y="357.2" font-size="9" fill="#064a10" textLength="23.6" lengthAdjust="spacingAndGlyphs" >DATA</text>
<text x="103" y="358.4" font-size="9.6" fill="#fff" font-weight="bold" textLength="47.5" lengthAdjust="spacingAndGlyphs" >CMD Data:</text>
<rect x="156" y="331.4" width="290.8" height="47.2" fill="#e4e4e4" />
<clipPath id="tb"><rect x="156" y="331.4" width="277" height="47.2"/></clipPath>
<g clip-path="url(#tb)">
<text x="158.6" y="341.0" font-size="8.6" fill="#222" textLength="243" lengthAdjust="spacingAndGlyphs" xml:space="preserve">CMD = 0x400000000095, CMD Index = CMD0, CMD Abbreviation =</text>
<text x="158.6" y="350.55" font-size="8.6" fill="#222" textLength="65" lengthAdjust="spacingAndGlyphs" xml:space="preserve">GO_IDLE_STATE</text>
<text x="158.6" y="360.1" font-size="8.6" fill="#222" textLength="258.5" lengthAdjust="spacingAndGlyphs" xml:space="preserve">Description : Start Bit = 0, Transmissoin Bit = 1, Argument = 0x00000000,</text>
<text x="158.6" y="369.65" font-size="8.6" fill="#222" textLength="260" lengthAdjust="spacingAndGlyphs" xml:space="preserve">CRC7 = 0x4A,  Stop Bit = 1, CMD Type = bc,Expected CMD Response =</text>
<text x="158.6" y="379.2" font-size="8.6" fill="#222" textLength="10" lengthAdjust="spacingAndGlyphs" xml:space="preserve">NR</text>
</g>
<rect x="432.6" y="331.4" width="14.2" height="47.2" fill="#f0f0f0" />
<rect x="434" y="344.3" width="11.5" height="16" fill="#cdcdcd" />
<path d="M436.6 339.4 L439.6 336.4 L442.6 339.4" fill="none" stroke="#444" stroke-width="1"/>
<path d="M436.6 370.6 L439.6 373.6 L442.6 370.6" fill="none" stroke="#444" stroke-width="1"/>
<rect x="454.5" y="331.5" width="211.5" height="47" fill="none" stroke="#1c2866" stroke-width="1"/>
<rect x="455.5" y="332.5" width="210" height="45.6" fill="none" stroke="#93a5dc" stroke-width="1"/>
<rect x="458.8" y="334.3" width="204.4" height="12" fill="#b3c7eb" />
<text x="560" y="343.6" font-size="9" fill="#1a1a30" textLength="25" lengthAdjust="spacingAndGlyphs" text-anchor="middle" >Search</text>
<rect x="459.2" y="350.2" width="58.8" height="15.2" fill="#d4d4d4" stroke="#b4b4b4" stroke-width="0.6"/>
<text x="488.2" y="360.6" font-size="9" fill="#222" font-weight="bold" textLength="48" lengthAdjust="spacingAndGlyphs" text-anchor="middle" >&lt;Previous&gt;</text>
<rect x="521.8" y="349.4" width="77.4" height="15" fill="#ececec" stroke="#a8aeb8" stroke-width="0.6"/>
<text x="525" y="360.2" font-size="8.8" fill="#222" textLength="18.4" lengthAdjust="spacingAndGlyphs" >None</text>
<path d="M588.4 355.4 L591.4 358.4 L594.4 355.4" fill="none" stroke="#444" stroke-width="0.9"/>
<rect x="602" y="350.2" width="60.4" height="15.2" fill="#d4d4d4" stroke="#b4b4b4" stroke-width="0.6"/>
<text x="631.4" y="360.6" font-size="9" fill="#222" font-weight="bold" textLength="31" lengthAdjust="spacingAndGlyphs" text-anchor="middle" >&lt;Next&gt;</text>
<rect x="529.2" y="366.3" width="59.6" height="10.8" fill="#000" />
<text x="532" y="375" font-size="8.8" fill="#fff" textLength="54.5" lengthAdjust="spacingAndGlyphs" >No Of Count=0</text>
<text x="670.8" y="343.9" font-size="9.4" fill="#fff" font-weight="bold" textLength="25" lengthAdjust="spacingAndGlyphs" >Show:</text>
<rect x="670.8" y="348.4" width="95.4" height="15" fill="#e4e4e4" stroke="#a8aeb8" stroke-width="0.6"/>
<text x="673.3" y="359.3" font-size="8.8" fill="#222" textLength="46.4" lengthAdjust="spacingAndGlyphs" >All Messages</text>
<path d="M754.4 354.6 L757.6 357.8 L760.8 354.6" fill="none" stroke="#444" stroke-width="0.9"/>
</svg>
<div class="grid">
<div class="hc" style="left:0.6px;width:127.8px;"><span style="padding-left:6.6px">CommandType</span></div>
<div class="hc" style="left:128.4px;width:96.4px;"><span style="padding-left:4.6px">Transmission<br>Bit</span></div>
<div class="hc" style="left:224.8px;width:79.4px;"><span style="padding-left:4.6px">CMD Start<br>Bit</span></div>
<div class="hc" style="left:304.2px;width:52.6px;"><span style="padding-left:4.6px">Command<br>Index</span></div>
<div class="hc" style="left:356.8px;width:74.6px;"><span style="padding-left:4.6px">CMD<br>Argument</span></div>
<div class="hc" style="left:431.4px;width:33.4px;"><span style="padding-left:4.6px">CRC7</span></div>
<div class="hc" style="left:464.8px;width:58.6px;"><span style="padding-left:4.6px">CMD Stop<br>Bit</span></div>
<div class="hc" style="left:523.4px;width:60.0px;"><span style="padding-left:4.6px">Time</span></div>
<div class="hc" style="left:583.4px;width:85.4px;"><span style="padding-left:4.6px">Protocol<br>Test Status</span></div>
<div class="hc" style="left:668.8px;width:68.0px;"><span style="padding-left:4.6px">Minimum Clock<br>Frequency</span></div>
<div class="row sel" style="top:29.40px;">
<div class="c" style="left:0.6px;width:127.8px;">GO_IDLE_STATE</div>
<div class="c" style="left:128.4px;width:96.4px;">1</div>
<div class="c" style="left:224.8px;width:79.4px;">0</div>
<div class="c" style="left:304.2px;width:52.6px;">0</div>
<div class="c" style="left:356.8px;width:74.6px;">0x00000000</div>
<div class="c" style="left:431.4px;width:33.4px;">0x4A</div>
<div class="c" style="left:464.8px;width:58.6px;">1</div>
<div class="c" style="left:523.4px;width:60.0px;">-1.3583µS</div>
<div class="c" style="left:583.4px;width:85.4px;">pass</div>
<div class="c" style="left:668.8px;width:68.0px;">389.89KHz</div>
</div>
<div class="row" style="top:44.53px;">
<div class="c" style="left:0.6px;width:127.8px;">SEND_OP_COND</div>
<div class="c" style="left:128.4px;width:96.4px;">1</div>
<div class="c" style="left:224.8px;width:79.4px;">0</div>
<div class="c" style="left:304.2px;width:52.6px;">1</div>
<div class="c" style="left:356.8px;width:74.6px;">0x40000080</div>
<div class="c" style="left:431.4px;width:33.4px;">0x74</div>
<div class="c" style="left:464.8px;width:58.6px;">1</div>
<div class="c" style="left:523.4px;width:60.0px;">357.62µS</div>
<div class="c" style="left:583.4px;width:85.4px;">pass</div>
<div class="c" style="left:668.8px;width:68.0px;">389.87KHz</div>
</div>
<div class="row" style="top:59.66px;">
<div class="c" style="left:0.6px;width:127.8px;">R3 Response</div>
<div class="c" style="left:128.4px;width:96.4px;">0</div>
<div class="c" style="left:224.8px;width:79.4px;">0</div>
<div class="c" style="left:304.2px;width:52.6px;">63</div>
<div class="c" style="left:356.8px;width:74.6px;">0x00FF8080</div>
<div class="c" style="left:431.4px;width:33.4px;">-</div>
<div class="c" style="left:464.8px;width:58.6px;">1</div>
<div class="c" style="left:523.4px;width:60.0px;">493.52µS</div>
<div class="c" style="left:583.4px;width:85.4px;">pass</div>
<div class="c" style="left:668.8px;width:68.0px;">389.90KHz</div>
</div>
<div class="row" style="top:74.79px;">
<div class="c" style="left:0.6px;width:127.8px;">SEND_OP_COND</div>
<div class="c" style="left:128.4px;width:96.4px;">1</div>
<div class="c" style="left:224.8px;width:79.4px;">0</div>
<div class="c" style="left:304.2px;width:52.6px;">1</div>
<div class="c" style="left:356.8px;width:74.6px;">0x40000080</div>
<div class="c" style="left:431.4px;width:33.4px;">0x74</div>
<div class="c" style="left:464.8px;width:58.6px;">1</div>
<div class="c" style="left:523.4px;width:60.0px;">2.3439mS</div>
<div class="c" style="left:583.4px;width:85.4px;">pass</div>
<div class="c" style="left:668.8px;width:68.0px;">389.87KHz</div>
</div>
<div class="row" style="top:89.92px;">
<div class="c" style="left:0.6px;width:127.8px;">R3 Response</div>
<div class="c" style="left:128.4px;width:96.4px;">0</div>
<div class="c" style="left:224.8px;width:79.4px;">0</div>
<div class="c" style="left:304.2px;width:52.6px;">63</div>
<div class="c" style="left:356.8px;width:74.6px;">0x00FF8080</div>
<div class="c" style="left:431.4px;width:33.4px;">-</div>
<div class="c" style="left:464.8px;width:58.6px;">1</div>
<div class="c" style="left:523.4px;width:60.0px;">2.4798mS</div>
<div class="c" style="left:583.4px;width:85.4px;">pass</div>
<div class="c" style="left:668.8px;width:68.0px;">389.88KHz</div>
</div>
<div class="row" style="top:105.05px;">
<div class="c" style="left:0.6px;width:127.8px;">SEND_OP_COND</div>
<div class="c" style="left:128.4px;width:96.4px;">1</div>
<div class="c" style="left:224.8px;width:79.4px;">0</div>
<div class="c" style="left:304.2px;width:52.6px;">1</div>
<div class="c" style="left:356.8px;width:74.6px;">0x40000080</div>
<div class="c" style="left:431.4px;width:33.4px;">0x74</div>
<div class="c" style="left:464.8px;width:58.6px;">1</div>
<div class="c" style="left:523.4px;width:60.0px;">5.2491mS</div>
<div class="c" style="left:583.4px;width:85.4px;">pass</div>
<div class="c" style="left:668.8px;width:68.0px;">389.85KHz</div>
</div>
<div class="row" style="top:120.18px;">
<div class="c" style="left:0.6px;width:127.8px;">R3 Response</div>
<div class="c" style="left:128.4px;width:96.4px;">0</div>
<div class="c" style="left:224.8px;width:79.4px;">0</div>
<div class="c" style="left:304.2px;width:52.6px;">63</div>
<div class="c" style="left:356.8px;width:74.6px;">0x00FF8080</div>
<div class="c" style="left:431.4px;width:33.4px;">-</div>
<div class="c" style="left:464.8px;width:58.6px;">1</div>
<div class="c" style="left:523.4px;width:60.0px;">5.3850mS</div>
<div class="c" style="left:583.4px;width:85.4px;">pass</div>
<div class="c" style="left:668.8px;width:68.0px;">389.85KHz</div>
</div>
<div class="row" style="top:135.31px;">
<div class="c" style="left:0.6px;width:127.8px;">SEND_OP_COND</div>
<div class="c" style="left:128.4px;width:96.4px;">1</div>
<div class="c" style="left:224.8px;width:79.4px;">0</div>
<div class="c" style="left:304.2px;width:52.6px;">1</div>
<div class="c" style="left:356.8px;width:74.6px;">0x40000080</div>
<div class="c" style="left:431.4px;width:33.4px;">0x74</div>
<div class="c" style="left:464.8px;width:58.6px;">1</div>
<div class="c" style="left:523.4px;width:60.0px;">8.1216mS</div>
<div class="c" style="left:583.4px;width:85.4px;">pass</div>
<div class="c" style="left:668.8px;width:68.0px;">389.92KHz</div>
</div>
<div class="row" style="top:150.44px;">
<div class="c" style="left:0.6px;width:127.8px;">R3 Response</div>
<div class="c" style="left:128.4px;width:96.4px;">0</div>
<div class="c" style="left:224.8px;width:79.4px;">0</div>
<div class="c" style="left:304.2px;width:52.6px;">63</div>
<div class="c" style="left:356.8px;width:74.6px;">0x00FF8080</div>
<div class="c" style="left:431.4px;width:33.4px;">-</div>
<div class="c" style="left:464.8px;width:58.6px;">1</div>
<div class="c" style="left:523.4px;width:60.0px;">8.2575mS</div>
<div class="c" style="left:583.4px;width:85.4px;">pass</div>
<div class="c" style="left:668.8px;width:68.0px;">389.91KHz</div>
</div>
<div class="row" style="top:165.57px;">
<div class="c" style="left:0.6px;width:127.8px;">SEND_OP_COND</div>
<div class="c" style="left:128.4px;width:96.4px;">1</div>
<div class="c" style="left:224.8px;width:79.4px;">0</div>
<div class="c" style="left:304.2px;width:52.6px;">1</div>
<div class="c" style="left:356.8px;width:74.6px;">0x40000080</div>
<div class="c" style="left:431.4px;width:33.4px;">0x74</div>
<div class="c" style="left:464.8px;width:58.6px;">1</div>
<div class="c" style="left:523.4px;width:60.0px;">11.011mS</div>
<div class="c" style="left:583.4px;width:85.4px;">pass</div>
<div class="c" style="left:668.8px;width:68.0px;">389.90KHz</div>
</div>
<div class="vs"><div class="vth"></div><svg width="13" height="180" style="position:absolute;left:0;top:0"><path d="M3.2 8.6 L6.4 5.4 L9.6 8.6" fill="none" stroke="#444" stroke-width="1.1"/><path d="M3.2 171 L6.4 174.2 L9.6 171" fill="none" stroke="#444" stroke-width="1.1"/></svg></div>
<div class="hs"><div class="hth"></div><svg width="750" height="13" style="position:absolute;left:0;top:0"><path d="M8.6 3.2 L5.6 6.2 L8.6 9.2" fill="none" stroke="#444" stroke-width="1.1"/><path d="M728.4 3.2 L731.4 6.2 L728.4 9.2" fill="none" stroke="#444" stroke-width="1.1"/></svg></div>
</div>
</body></html>
